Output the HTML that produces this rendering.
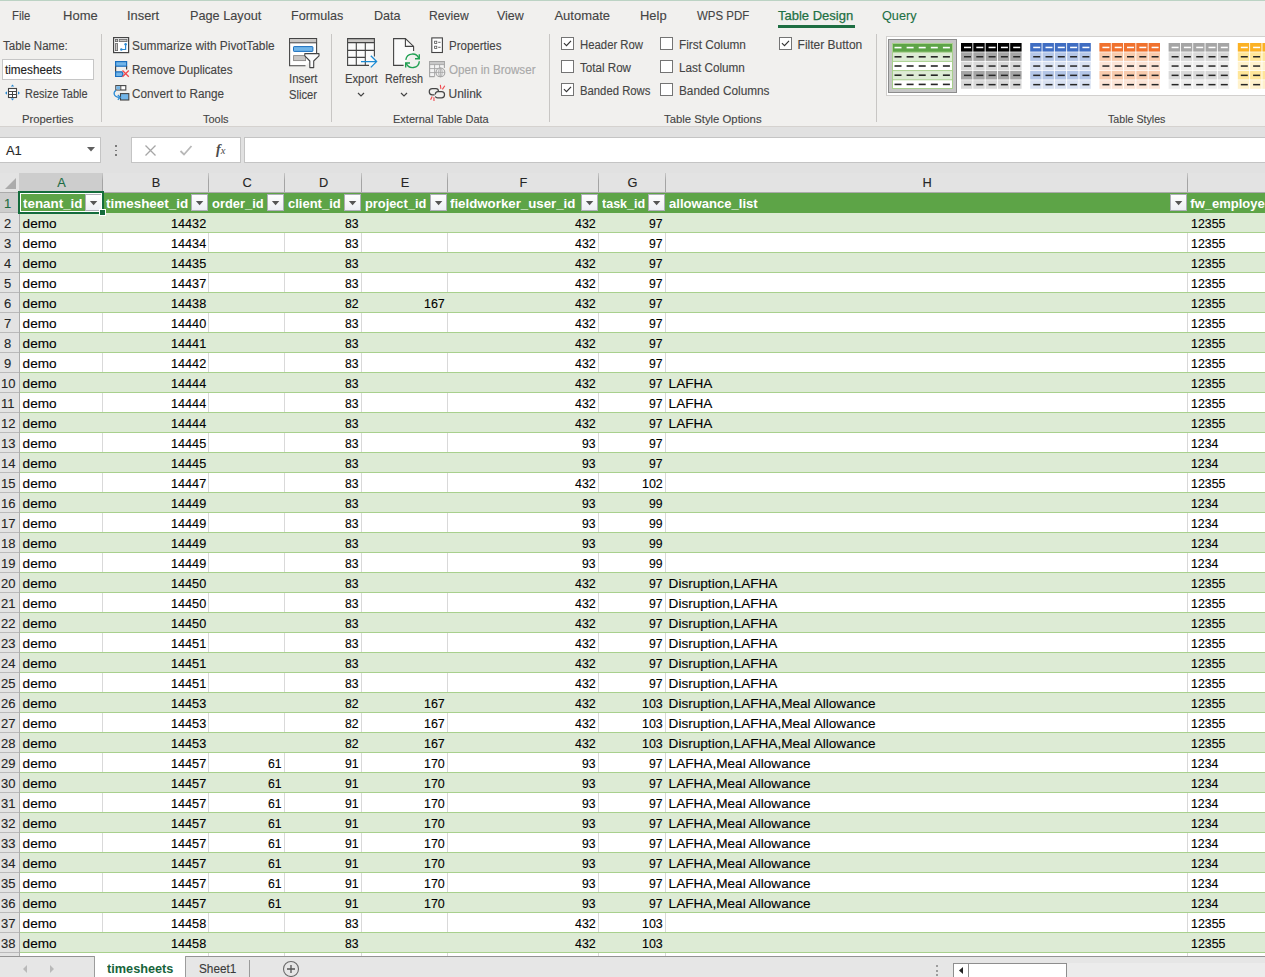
<!DOCTYPE html><html><head><meta charset="utf-8"><style>
html,body{margin:0;padding:0;}
body{width:1265px;height:977px;overflow:hidden;position:relative;font-family:"Liberation Sans",sans-serif;background:#e1e1e1;}
.t{position:absolute;white-space:pre;transform-origin:0 0;-webkit-text-stroke:0.12px currentColor;}
.r{position:absolute;}
</style></head><body>
<div class="r" style="left:0px;top:0px;width:1265px;height:126px;background:#f1f0ee"></div>
<div class="r" style="left:0px;top:0px;width:1265px;height:1px;background:#bcd3c4"></div>
<div class="r" style="left:0px;top:126px;width:1265px;height:1px;background:#d5d2cf"></div>
<div class="r" style="left:0px;top:127px;width:1265px;height:850px;background:#e1e1e1"></div>
<div class="t" style="left:11.60px;top:9.20px;font-size:13px;line-height:13px;color:#444;transform:scaleX(0.8738);">File</div>
<div class="t" style="left:63.10px;top:9.20px;font-size:13px;line-height:13px;color:#444;">Home</div>
<div class="t" style="left:127.20px;top:9.20px;font-size:13px;line-height:13px;color:#444;transform:scaleX(0.9904);">Insert</div>
<div class="t" style="left:189.90px;top:9.20px;font-size:13px;line-height:13px;color:#444;transform:scaleX(0.9780);">Page Layout</div>
<div class="t" style="left:291.20px;top:9.20px;font-size:13px;line-height:13px;color:#444;transform:scaleX(0.9671);">Formulas</div>
<div class="t" style="left:373.50px;top:9.20px;font-size:13px;line-height:13px;color:#444;transform:scaleX(0.9647);">Data</div>
<div class="t" style="left:429.20px;top:9.20px;font-size:13px;line-height:13px;color:#444;transform:scaleX(0.9328);">Review</div>
<div class="t" style="left:497.00px;top:9.20px;font-size:13px;line-height:13px;color:#444;transform:scaleX(0.9580);">View</div>
<div class="t" style="left:554.40px;top:9.20px;font-size:13px;line-height:13px;color:#444;">Automate</div>
<div class="t" style="left:640.00px;top:9.20px;font-size:13px;line-height:13px;color:#444;transform:scaleX(0.9947);">Help</div>
<div class="t" style="left:697.00px;top:9.20px;font-size:13px;line-height:13px;color:#444;transform:scaleX(0.8830);">WPS PDF</div>
<div class="t" style="left:778.00px;top:9.20px;font-size:13px;line-height:13px;color:#1e7145;-webkit-text-stroke:0.25px #1e7145;">Table Design</div>
<div class="t" style="left:882.00px;top:9.20px;font-size:13px;line-height:13px;color:#1e7145;transform:scaleX(0.9746);">Query</div>
<div class="r" style="left:778px;top:25px;width:77px;height:3px;background:#1e6e42"></div>
<div class="t" style="left:21.50px;top:112.58px;font-size:11.6px;line-height:11.6px;color:#444;transform:scaleX(0.9740);">Properties</div>
<div class="t" style="left:203.40px;top:112.58px;font-size:11.6px;line-height:11.6px;color:#444;transform:scaleX(0.9455);">Tools</div>
<div class="t" style="left:392.70px;top:112.58px;font-size:11.6px;line-height:11.6px;color:#444;transform:scaleX(0.9482);">External Table Data</div>
<div class="t" style="left:664.00px;top:112.58px;font-size:11.6px;line-height:11.6px;color:#444;transform:scaleX(0.9765);">Table Style Options</div>
<div class="t" style="left:1108.00px;top:112.58px;font-size:11.6px;line-height:11.6px;color:#444;transform:scaleX(0.9177);">Table Styles</div>
<div class="r" style="left:101px;top:34px;width:1px;height:88px;background:#c8c6c4"></div>
<div class="r" style="left:331px;top:34px;width:1px;height:88px;background:#c8c6c4"></div>
<div class="r" style="left:549px;top:34px;width:1px;height:88px;background:#c8c6c4"></div>
<div class="r" style="left:876px;top:34px;width:1px;height:88px;background:#c8c6c4"></div>
<div class="t" style="left:2.60px;top:40.04px;font-size:12px;line-height:12px;color:#444;transform:scaleX(0.9619);">Table Name:</div>
<div class="r" style="left:2px;top:59px;width:92px;height:21px;background:#fff;box-sizing:border-box;border:1px solid #c6c6c6"></div>
<div class="t" style="left:5.40px;top:63.84px;font-size:12px;line-height:12px;color:#222;transform:scaleX(0.9755);">timesheets</div>
<div class="t" style="left:24.80px;top:87.64px;font-size:12px;line-height:12px;color:#444;transform:scaleX(0.9126);">Resize Table</div>
<div class="t" style="left:132.30px;top:39.84px;font-size:12px;line-height:12px;color:#444;transform:scaleX(0.9906);">Summarize with PivotTable</div>
<div class="t" style="left:132.30px;top:63.84px;font-size:12px;line-height:12px;color:#444;transform:scaleX(0.9660);">Remove Duplicates</div>
<div class="t" style="left:132.30px;top:87.84px;font-size:12px;line-height:12px;color:#444;transform:scaleX(0.9781);">Convert to Range</div>
<div class="t" style="left:288.50px;top:72.84px;font-size:12px;line-height:12px;color:#444;transform:scaleX(0.9496);">Insert</div>
<div class="t" style="left:289.00px;top:88.54px;font-size:12px;line-height:12px;color:#444;transform:scaleX(0.9330);">Slicer</div>
<div class="t" style="left:344.50px;top:72.54px;font-size:12px;line-height:12px;color:#444;transform:scaleX(0.9371);">Export</div>
<div class="t" style="left:384.50px;top:72.54px;font-size:12px;line-height:12px;color:#444;transform:scaleX(0.9021);">Refresh</div>
<div class="t" style="left:448.50px;top:40.44px;font-size:12px;line-height:12px;color:#444;transform:scaleX(0.9599);">Properties</div>
<div class="t" style="left:448.50px;top:63.84px;font-size:12px;line-height:12px;color:#a8a8a8;transform:scaleX(0.9678);">Open in Browser</div>
<div class="t" style="left:448.50px;top:87.84px;font-size:12px;line-height:12px;color:#444;">Unlink</div>
<div class="r" style="left:561px;top:37px;width:13px;height:13px;box-sizing:border-box;border:1px solid #747474;background:#fff"></div>
<svg class="r" style="left:561px;top:37px" width="13" height="13"><path d="M2.9 6.2 L5.5 8.6 L10 3.8" fill="none" stroke="#333" stroke-width="1.15"/></svg>
<div class="t" style="left:579.60px;top:38.84px;font-size:12px;line-height:12px;color:#444;transform:scaleX(0.9456);">Header Row</div>
<div class="r" style="left:561px;top:60px;width:13px;height:13px;box-sizing:border-box;border:1px solid #747474;background:#fff"></div>
<div class="t" style="left:579.60px;top:61.84px;font-size:12px;line-height:12px;color:#444;transform:scaleX(0.9674);">Total Row</div>
<div class="r" style="left:561px;top:83px;width:13px;height:13px;box-sizing:border-box;border:1px solid #747474;background:#fff"></div>
<svg class="r" style="left:561px;top:83px" width="13" height="13"><path d="M2.9 6.2 L5.5 8.6 L10 3.8" fill="none" stroke="#333" stroke-width="1.15"/></svg>
<div class="t" style="left:579.60px;top:84.84px;font-size:12px;line-height:12px;color:#444;transform:scaleX(0.9423);">Banded Rows</div>
<div class="r" style="left:660px;top:37px;width:13px;height:13px;box-sizing:border-box;border:1px solid #747474;background:#fff"></div>
<div class="t" style="left:678.60px;top:38.84px;font-size:12px;line-height:12px;color:#444;transform:scaleX(0.9836);">First Column</div>
<div class="r" style="left:660px;top:60px;width:13px;height:13px;box-sizing:border-box;border:1px solid #747474;background:#fff"></div>
<div class="t" style="left:678.60px;top:61.84px;font-size:12px;line-height:12px;color:#444;transform:scaleX(0.9782);">Last Column</div>
<div class="r" style="left:660px;top:83px;width:13px;height:13px;box-sizing:border-box;border:1px solid #747474;background:#fff"></div>
<div class="t" style="left:678.60px;top:84.84px;font-size:12px;line-height:12px;color:#444;transform:scaleX(0.9831);">Banded Columns</div>
<div class="r" style="left:779px;top:37px;width:13px;height:13px;box-sizing:border-box;border:1px solid #747474;background:#fff"></div>
<svg class="r" style="left:779px;top:37px" width="13" height="13"><path d="M2.9 6.2 L5.5 8.6 L10 3.8" fill="none" stroke="#333" stroke-width="1.15"/></svg>
<div class="t" style="left:797.60px;top:38.84px;font-size:12px;line-height:12px;color:#444;">Filter Button</div>
<div class="r" style="left:0px;top:173px;width:1265px;height:19px;background:#e3e3e3"></div>
<div class="r" style="left:0px;top:192px;width:1265px;height:1px;background:#ababab"></div>
<div class="r" style="left:19px;top:173px;width:84px;height:19px;background:#cdcdcd"></div>
<svg class="r" style="left:4px;top:177px" width="13" height="13"><path d="M1 12 L12 12 L12 1 Z" fill="#ababab"/></svg>
<div class="r" style="left:102px;top:173px;width:1px;height:19px;background:linear-gradient(#c8c8c8,#a4a4a4 40%,#a4a4a4)"></div>
<div class="t" style="left:57.23px;top:177.16px;font-size:12.8px;line-height:12.8px;color:#1d6b44;">A</div>
<div class="r" style="left:208px;top:173px;width:1px;height:19px;background:linear-gradient(#c8c8c8,#a4a4a4 40%,#a4a4a4)"></div>
<div class="t" style="left:151.73px;top:177.16px;font-size:12.8px;line-height:12.8px;color:#262626;">B</div>
<div class="r" style="left:284px;top:173px;width:1px;height:19px;background:linear-gradient(#c8c8c8,#a4a4a4 40%,#a4a4a4)"></div>
<div class="t" style="left:242.38px;top:177.16px;font-size:12.8px;line-height:12.8px;color:#262626;">C</div>
<div class="r" style="left:361px;top:173px;width:1px;height:19px;background:linear-gradient(#c8c8c8,#a4a4a4 40%,#a4a4a4)"></div>
<div class="t" style="left:318.88px;top:177.16px;font-size:12.8px;line-height:12.8px;color:#262626;">D</div>
<div class="r" style="left:447px;top:173px;width:1px;height:19px;background:linear-gradient(#c8c8c8,#a4a4a4 40%,#a4a4a4)"></div>
<div class="t" style="left:400.73px;top:177.16px;font-size:12.8px;line-height:12.8px;color:#262626;">E</div>
<div class="r" style="left:598px;top:173px;width:1px;height:19px;background:linear-gradient(#c8c8c8,#a4a4a4 40%,#a4a4a4)"></div>
<div class="t" style="left:519.59px;top:177.16px;font-size:12.8px;line-height:12.8px;color:#262626;">F</div>
<div class="r" style="left:665px;top:173px;width:1px;height:19px;background:linear-gradient(#c8c8c8,#a4a4a4 40%,#a4a4a4)"></div>
<div class="t" style="left:627.52px;top:177.16px;font-size:12.8px;line-height:12.8px;color:#262626;">G</div>
<div class="r" style="left:1187px;top:173px;width:1px;height:19px;background:linear-gradient(#c8c8c8,#a4a4a4 40%,#a4a4a4)"></div>
<div class="t" style="left:922.38px;top:177.16px;font-size:12.8px;line-height:12.8px;color:#262626;">H</div>
<div class="r" style="left:1400px;top:173px;width:1px;height:19px;background:linear-gradient(#c8c8c8,#a4a4a4 40%,#a4a4a4)"></div>
<div class="r" style="left:0px;top:193px;width:19px;height:765px;background:#e3e3e3"></div>
<div class="r" style="left:19px;top:193px;width:1px;height:765px;background:#adadad"></div>
<div class="r" style="left:0px;top:193px;width:19px;height:19px;background:#cdcdcd"></div>
<div class="r" style="left:0px;top:212px;width:19px;height:1px;background:#bababa"></div>
<div class="r" style="left:20px;top:193px;width:1245px;height:20px;background:#5da447"></div>
<div class="t" style="left:4.00px;top:197.00px;font-size:13px;line-height:13px;color:#1d6b44;">1</div>
<div class="r" style="left:0px;top:232px;width:19px;height:1px;background:#bababa"></div>
<div class="r" style="left:20px;top:213px;width:1245px;height:19px;background:#ddebd5"></div>
<div class="t" style="left:4.00px;top:217.00px;font-size:13px;line-height:13px;color:#262626;">2</div>
<div class="r" style="left:0px;top:252px;width:19px;height:1px;background:#bababa"></div>
<div class="r" style="left:20px;top:233px;width:1245px;height:19px;background:#fff"></div>
<div class="r" style="left:102px;top:233px;width:1px;height:19px;background:#d9d9d9"></div>
<div class="r" style="left:208px;top:233px;width:1px;height:19px;background:#d9d9d9"></div>
<div class="r" style="left:284px;top:233px;width:1px;height:19px;background:#d9d9d9"></div>
<div class="r" style="left:361px;top:233px;width:1px;height:19px;background:#d9d9d9"></div>
<div class="r" style="left:447px;top:233px;width:1px;height:19px;background:#d9d9d9"></div>
<div class="r" style="left:598px;top:233px;width:1px;height:19px;background:#d9d9d9"></div>
<div class="r" style="left:665px;top:233px;width:1px;height:19px;background:#d9d9d9"></div>
<div class="r" style="left:1187px;top:233px;width:1px;height:19px;background:#d9d9d9"></div>
<div class="t" style="left:4.00px;top:237.00px;font-size:13px;line-height:13px;color:#262626;">3</div>
<div class="r" style="left:0px;top:272px;width:19px;height:1px;background:#bababa"></div>
<div class="r" style="left:20px;top:253px;width:1245px;height:19px;background:#ddebd5"></div>
<div class="t" style="left:4.00px;top:257.00px;font-size:13px;line-height:13px;color:#262626;">4</div>
<div class="r" style="left:0px;top:292px;width:19px;height:1px;background:#bababa"></div>
<div class="r" style="left:20px;top:273px;width:1245px;height:19px;background:#fff"></div>
<div class="r" style="left:102px;top:273px;width:1px;height:19px;background:#d9d9d9"></div>
<div class="r" style="left:208px;top:273px;width:1px;height:19px;background:#d9d9d9"></div>
<div class="r" style="left:284px;top:273px;width:1px;height:19px;background:#d9d9d9"></div>
<div class="r" style="left:361px;top:273px;width:1px;height:19px;background:#d9d9d9"></div>
<div class="r" style="left:447px;top:273px;width:1px;height:19px;background:#d9d9d9"></div>
<div class="r" style="left:598px;top:273px;width:1px;height:19px;background:#d9d9d9"></div>
<div class="r" style="left:665px;top:273px;width:1px;height:19px;background:#d9d9d9"></div>
<div class="r" style="left:1187px;top:273px;width:1px;height:19px;background:#d9d9d9"></div>
<div class="t" style="left:4.00px;top:277.00px;font-size:13px;line-height:13px;color:#262626;">5</div>
<div class="r" style="left:0px;top:312px;width:19px;height:1px;background:#bababa"></div>
<div class="r" style="left:20px;top:293px;width:1245px;height:19px;background:#ddebd5"></div>
<div class="t" style="left:4.00px;top:297.00px;font-size:13px;line-height:13px;color:#262626;">6</div>
<div class="r" style="left:0px;top:332px;width:19px;height:1px;background:#bababa"></div>
<div class="r" style="left:20px;top:313px;width:1245px;height:19px;background:#fff"></div>
<div class="r" style="left:102px;top:313px;width:1px;height:19px;background:#d9d9d9"></div>
<div class="r" style="left:208px;top:313px;width:1px;height:19px;background:#d9d9d9"></div>
<div class="r" style="left:284px;top:313px;width:1px;height:19px;background:#d9d9d9"></div>
<div class="r" style="left:361px;top:313px;width:1px;height:19px;background:#d9d9d9"></div>
<div class="r" style="left:447px;top:313px;width:1px;height:19px;background:#d9d9d9"></div>
<div class="r" style="left:598px;top:313px;width:1px;height:19px;background:#d9d9d9"></div>
<div class="r" style="left:665px;top:313px;width:1px;height:19px;background:#d9d9d9"></div>
<div class="r" style="left:1187px;top:313px;width:1px;height:19px;background:#d9d9d9"></div>
<div class="t" style="left:4.00px;top:317.00px;font-size:13px;line-height:13px;color:#262626;">7</div>
<div class="r" style="left:0px;top:352px;width:19px;height:1px;background:#bababa"></div>
<div class="r" style="left:20px;top:333px;width:1245px;height:19px;background:#ddebd5"></div>
<div class="t" style="left:4.00px;top:337.00px;font-size:13px;line-height:13px;color:#262626;">8</div>
<div class="r" style="left:0px;top:372px;width:19px;height:1px;background:#bababa"></div>
<div class="r" style="left:20px;top:353px;width:1245px;height:19px;background:#fff"></div>
<div class="r" style="left:102px;top:353px;width:1px;height:19px;background:#d9d9d9"></div>
<div class="r" style="left:208px;top:353px;width:1px;height:19px;background:#d9d9d9"></div>
<div class="r" style="left:284px;top:353px;width:1px;height:19px;background:#d9d9d9"></div>
<div class="r" style="left:361px;top:353px;width:1px;height:19px;background:#d9d9d9"></div>
<div class="r" style="left:447px;top:353px;width:1px;height:19px;background:#d9d9d9"></div>
<div class="r" style="left:598px;top:353px;width:1px;height:19px;background:#d9d9d9"></div>
<div class="r" style="left:665px;top:353px;width:1px;height:19px;background:#d9d9d9"></div>
<div class="r" style="left:1187px;top:353px;width:1px;height:19px;background:#d9d9d9"></div>
<div class="t" style="left:4.00px;top:357.00px;font-size:13px;line-height:13px;color:#262626;">9</div>
<div class="r" style="left:0px;top:392px;width:19px;height:1px;background:#bababa"></div>
<div class="r" style="left:20px;top:373px;width:1245px;height:19px;background:#ddebd5"></div>
<div class="t" style="left:1.00px;top:377.00px;font-size:13px;line-height:13px;color:#262626;">10</div>
<div class="r" style="left:0px;top:412px;width:19px;height:1px;background:#bababa"></div>
<div class="r" style="left:20px;top:393px;width:1245px;height:19px;background:#fff"></div>
<div class="r" style="left:102px;top:393px;width:1px;height:19px;background:#d9d9d9"></div>
<div class="r" style="left:208px;top:393px;width:1px;height:19px;background:#d9d9d9"></div>
<div class="r" style="left:284px;top:393px;width:1px;height:19px;background:#d9d9d9"></div>
<div class="r" style="left:361px;top:393px;width:1px;height:19px;background:#d9d9d9"></div>
<div class="r" style="left:447px;top:393px;width:1px;height:19px;background:#d9d9d9"></div>
<div class="r" style="left:598px;top:393px;width:1px;height:19px;background:#d9d9d9"></div>
<div class="r" style="left:665px;top:393px;width:1px;height:19px;background:#d9d9d9"></div>
<div class="r" style="left:1187px;top:393px;width:1px;height:19px;background:#d9d9d9"></div>
<div class="t" style="left:1.00px;top:397.00px;font-size:13px;line-height:13px;color:#262626;">11</div>
<div class="r" style="left:0px;top:432px;width:19px;height:1px;background:#bababa"></div>
<div class="r" style="left:20px;top:413px;width:1245px;height:19px;background:#ddebd5"></div>
<div class="t" style="left:1.00px;top:417.00px;font-size:13px;line-height:13px;color:#262626;">12</div>
<div class="r" style="left:0px;top:452px;width:19px;height:1px;background:#bababa"></div>
<div class="r" style="left:20px;top:433px;width:1245px;height:19px;background:#fff"></div>
<div class="r" style="left:102px;top:433px;width:1px;height:19px;background:#d9d9d9"></div>
<div class="r" style="left:208px;top:433px;width:1px;height:19px;background:#d9d9d9"></div>
<div class="r" style="left:284px;top:433px;width:1px;height:19px;background:#d9d9d9"></div>
<div class="r" style="left:361px;top:433px;width:1px;height:19px;background:#d9d9d9"></div>
<div class="r" style="left:447px;top:433px;width:1px;height:19px;background:#d9d9d9"></div>
<div class="r" style="left:598px;top:433px;width:1px;height:19px;background:#d9d9d9"></div>
<div class="r" style="left:665px;top:433px;width:1px;height:19px;background:#d9d9d9"></div>
<div class="r" style="left:1187px;top:433px;width:1px;height:19px;background:#d9d9d9"></div>
<div class="t" style="left:1.00px;top:437.00px;font-size:13px;line-height:13px;color:#262626;">13</div>
<div class="r" style="left:0px;top:472px;width:19px;height:1px;background:#bababa"></div>
<div class="r" style="left:20px;top:453px;width:1245px;height:19px;background:#ddebd5"></div>
<div class="t" style="left:1.00px;top:457.00px;font-size:13px;line-height:13px;color:#262626;">14</div>
<div class="r" style="left:0px;top:492px;width:19px;height:1px;background:#bababa"></div>
<div class="r" style="left:20px;top:473px;width:1245px;height:19px;background:#fff"></div>
<div class="r" style="left:102px;top:473px;width:1px;height:19px;background:#d9d9d9"></div>
<div class="r" style="left:208px;top:473px;width:1px;height:19px;background:#d9d9d9"></div>
<div class="r" style="left:284px;top:473px;width:1px;height:19px;background:#d9d9d9"></div>
<div class="r" style="left:361px;top:473px;width:1px;height:19px;background:#d9d9d9"></div>
<div class="r" style="left:447px;top:473px;width:1px;height:19px;background:#d9d9d9"></div>
<div class="r" style="left:598px;top:473px;width:1px;height:19px;background:#d9d9d9"></div>
<div class="r" style="left:665px;top:473px;width:1px;height:19px;background:#d9d9d9"></div>
<div class="r" style="left:1187px;top:473px;width:1px;height:19px;background:#d9d9d9"></div>
<div class="t" style="left:1.00px;top:477.00px;font-size:13px;line-height:13px;color:#262626;">15</div>
<div class="r" style="left:0px;top:512px;width:19px;height:1px;background:#bababa"></div>
<div class="r" style="left:20px;top:493px;width:1245px;height:19px;background:#ddebd5"></div>
<div class="t" style="left:1.00px;top:497.00px;font-size:13px;line-height:13px;color:#262626;">16</div>
<div class="r" style="left:0px;top:532px;width:19px;height:1px;background:#bababa"></div>
<div class="r" style="left:20px;top:513px;width:1245px;height:19px;background:#fff"></div>
<div class="r" style="left:102px;top:513px;width:1px;height:19px;background:#d9d9d9"></div>
<div class="r" style="left:208px;top:513px;width:1px;height:19px;background:#d9d9d9"></div>
<div class="r" style="left:284px;top:513px;width:1px;height:19px;background:#d9d9d9"></div>
<div class="r" style="left:361px;top:513px;width:1px;height:19px;background:#d9d9d9"></div>
<div class="r" style="left:447px;top:513px;width:1px;height:19px;background:#d9d9d9"></div>
<div class="r" style="left:598px;top:513px;width:1px;height:19px;background:#d9d9d9"></div>
<div class="r" style="left:665px;top:513px;width:1px;height:19px;background:#d9d9d9"></div>
<div class="r" style="left:1187px;top:513px;width:1px;height:19px;background:#d9d9d9"></div>
<div class="t" style="left:1.00px;top:517.00px;font-size:13px;line-height:13px;color:#262626;">17</div>
<div class="r" style="left:0px;top:552px;width:19px;height:1px;background:#bababa"></div>
<div class="r" style="left:20px;top:533px;width:1245px;height:19px;background:#ddebd5"></div>
<div class="t" style="left:1.00px;top:537.00px;font-size:13px;line-height:13px;color:#262626;">18</div>
<div class="r" style="left:0px;top:572px;width:19px;height:1px;background:#bababa"></div>
<div class="r" style="left:20px;top:553px;width:1245px;height:19px;background:#fff"></div>
<div class="r" style="left:102px;top:553px;width:1px;height:19px;background:#d9d9d9"></div>
<div class="r" style="left:208px;top:553px;width:1px;height:19px;background:#d9d9d9"></div>
<div class="r" style="left:284px;top:553px;width:1px;height:19px;background:#d9d9d9"></div>
<div class="r" style="left:361px;top:553px;width:1px;height:19px;background:#d9d9d9"></div>
<div class="r" style="left:447px;top:553px;width:1px;height:19px;background:#d9d9d9"></div>
<div class="r" style="left:598px;top:553px;width:1px;height:19px;background:#d9d9d9"></div>
<div class="r" style="left:665px;top:553px;width:1px;height:19px;background:#d9d9d9"></div>
<div class="r" style="left:1187px;top:553px;width:1px;height:19px;background:#d9d9d9"></div>
<div class="t" style="left:1.00px;top:557.00px;font-size:13px;line-height:13px;color:#262626;">19</div>
<div class="r" style="left:0px;top:592px;width:19px;height:1px;background:#bababa"></div>
<div class="r" style="left:20px;top:573px;width:1245px;height:19px;background:#ddebd5"></div>
<div class="t" style="left:1.00px;top:577.00px;font-size:13px;line-height:13px;color:#262626;">20</div>
<div class="r" style="left:0px;top:612px;width:19px;height:1px;background:#bababa"></div>
<div class="r" style="left:20px;top:593px;width:1245px;height:19px;background:#fff"></div>
<div class="r" style="left:102px;top:593px;width:1px;height:19px;background:#d9d9d9"></div>
<div class="r" style="left:208px;top:593px;width:1px;height:19px;background:#d9d9d9"></div>
<div class="r" style="left:284px;top:593px;width:1px;height:19px;background:#d9d9d9"></div>
<div class="r" style="left:361px;top:593px;width:1px;height:19px;background:#d9d9d9"></div>
<div class="r" style="left:447px;top:593px;width:1px;height:19px;background:#d9d9d9"></div>
<div class="r" style="left:598px;top:593px;width:1px;height:19px;background:#d9d9d9"></div>
<div class="r" style="left:665px;top:593px;width:1px;height:19px;background:#d9d9d9"></div>
<div class="r" style="left:1187px;top:593px;width:1px;height:19px;background:#d9d9d9"></div>
<div class="t" style="left:1.00px;top:597.00px;font-size:13px;line-height:13px;color:#262626;">21</div>
<div class="r" style="left:0px;top:632px;width:19px;height:1px;background:#bababa"></div>
<div class="r" style="left:20px;top:613px;width:1245px;height:19px;background:#ddebd5"></div>
<div class="t" style="left:1.00px;top:617.00px;font-size:13px;line-height:13px;color:#262626;">22</div>
<div class="r" style="left:0px;top:652px;width:19px;height:1px;background:#bababa"></div>
<div class="r" style="left:20px;top:633px;width:1245px;height:19px;background:#fff"></div>
<div class="r" style="left:102px;top:633px;width:1px;height:19px;background:#d9d9d9"></div>
<div class="r" style="left:208px;top:633px;width:1px;height:19px;background:#d9d9d9"></div>
<div class="r" style="left:284px;top:633px;width:1px;height:19px;background:#d9d9d9"></div>
<div class="r" style="left:361px;top:633px;width:1px;height:19px;background:#d9d9d9"></div>
<div class="r" style="left:447px;top:633px;width:1px;height:19px;background:#d9d9d9"></div>
<div class="r" style="left:598px;top:633px;width:1px;height:19px;background:#d9d9d9"></div>
<div class="r" style="left:665px;top:633px;width:1px;height:19px;background:#d9d9d9"></div>
<div class="r" style="left:1187px;top:633px;width:1px;height:19px;background:#d9d9d9"></div>
<div class="t" style="left:1.00px;top:637.00px;font-size:13px;line-height:13px;color:#262626;">23</div>
<div class="r" style="left:0px;top:672px;width:19px;height:1px;background:#bababa"></div>
<div class="r" style="left:20px;top:653px;width:1245px;height:19px;background:#ddebd5"></div>
<div class="t" style="left:1.00px;top:657.00px;font-size:13px;line-height:13px;color:#262626;">24</div>
<div class="r" style="left:0px;top:692px;width:19px;height:1px;background:#bababa"></div>
<div class="r" style="left:20px;top:673px;width:1245px;height:19px;background:#fff"></div>
<div class="r" style="left:102px;top:673px;width:1px;height:19px;background:#d9d9d9"></div>
<div class="r" style="left:208px;top:673px;width:1px;height:19px;background:#d9d9d9"></div>
<div class="r" style="left:284px;top:673px;width:1px;height:19px;background:#d9d9d9"></div>
<div class="r" style="left:361px;top:673px;width:1px;height:19px;background:#d9d9d9"></div>
<div class="r" style="left:447px;top:673px;width:1px;height:19px;background:#d9d9d9"></div>
<div class="r" style="left:598px;top:673px;width:1px;height:19px;background:#d9d9d9"></div>
<div class="r" style="left:665px;top:673px;width:1px;height:19px;background:#d9d9d9"></div>
<div class="r" style="left:1187px;top:673px;width:1px;height:19px;background:#d9d9d9"></div>
<div class="t" style="left:1.00px;top:677.00px;font-size:13px;line-height:13px;color:#262626;">25</div>
<div class="r" style="left:0px;top:712px;width:19px;height:1px;background:#bababa"></div>
<div class="r" style="left:20px;top:693px;width:1245px;height:19px;background:#ddebd5"></div>
<div class="t" style="left:1.00px;top:697.00px;font-size:13px;line-height:13px;color:#262626;">26</div>
<div class="r" style="left:0px;top:732px;width:19px;height:1px;background:#bababa"></div>
<div class="r" style="left:20px;top:713px;width:1245px;height:19px;background:#fff"></div>
<div class="r" style="left:102px;top:713px;width:1px;height:19px;background:#d9d9d9"></div>
<div class="r" style="left:208px;top:713px;width:1px;height:19px;background:#d9d9d9"></div>
<div class="r" style="left:284px;top:713px;width:1px;height:19px;background:#d9d9d9"></div>
<div class="r" style="left:361px;top:713px;width:1px;height:19px;background:#d9d9d9"></div>
<div class="r" style="left:447px;top:713px;width:1px;height:19px;background:#d9d9d9"></div>
<div class="r" style="left:598px;top:713px;width:1px;height:19px;background:#d9d9d9"></div>
<div class="r" style="left:665px;top:713px;width:1px;height:19px;background:#d9d9d9"></div>
<div class="r" style="left:1187px;top:713px;width:1px;height:19px;background:#d9d9d9"></div>
<div class="t" style="left:1.00px;top:717.00px;font-size:13px;line-height:13px;color:#262626;">27</div>
<div class="r" style="left:0px;top:752px;width:19px;height:1px;background:#bababa"></div>
<div class="r" style="left:20px;top:733px;width:1245px;height:19px;background:#ddebd5"></div>
<div class="t" style="left:1.00px;top:737.00px;font-size:13px;line-height:13px;color:#262626;">28</div>
<div class="r" style="left:0px;top:772px;width:19px;height:1px;background:#bababa"></div>
<div class="r" style="left:20px;top:753px;width:1245px;height:19px;background:#fff"></div>
<div class="r" style="left:102px;top:753px;width:1px;height:19px;background:#d9d9d9"></div>
<div class="r" style="left:208px;top:753px;width:1px;height:19px;background:#d9d9d9"></div>
<div class="r" style="left:284px;top:753px;width:1px;height:19px;background:#d9d9d9"></div>
<div class="r" style="left:361px;top:753px;width:1px;height:19px;background:#d9d9d9"></div>
<div class="r" style="left:447px;top:753px;width:1px;height:19px;background:#d9d9d9"></div>
<div class="r" style="left:598px;top:753px;width:1px;height:19px;background:#d9d9d9"></div>
<div class="r" style="left:665px;top:753px;width:1px;height:19px;background:#d9d9d9"></div>
<div class="r" style="left:1187px;top:753px;width:1px;height:19px;background:#d9d9d9"></div>
<div class="t" style="left:1.00px;top:757.00px;font-size:13px;line-height:13px;color:#262626;">29</div>
<div class="r" style="left:0px;top:792px;width:19px;height:1px;background:#bababa"></div>
<div class="r" style="left:20px;top:773px;width:1245px;height:19px;background:#ddebd5"></div>
<div class="t" style="left:1.00px;top:777.00px;font-size:13px;line-height:13px;color:#262626;">30</div>
<div class="r" style="left:0px;top:812px;width:19px;height:1px;background:#bababa"></div>
<div class="r" style="left:20px;top:793px;width:1245px;height:19px;background:#fff"></div>
<div class="r" style="left:102px;top:793px;width:1px;height:19px;background:#d9d9d9"></div>
<div class="r" style="left:208px;top:793px;width:1px;height:19px;background:#d9d9d9"></div>
<div class="r" style="left:284px;top:793px;width:1px;height:19px;background:#d9d9d9"></div>
<div class="r" style="left:361px;top:793px;width:1px;height:19px;background:#d9d9d9"></div>
<div class="r" style="left:447px;top:793px;width:1px;height:19px;background:#d9d9d9"></div>
<div class="r" style="left:598px;top:793px;width:1px;height:19px;background:#d9d9d9"></div>
<div class="r" style="left:665px;top:793px;width:1px;height:19px;background:#d9d9d9"></div>
<div class="r" style="left:1187px;top:793px;width:1px;height:19px;background:#d9d9d9"></div>
<div class="t" style="left:1.00px;top:797.00px;font-size:13px;line-height:13px;color:#262626;">31</div>
<div class="r" style="left:0px;top:832px;width:19px;height:1px;background:#bababa"></div>
<div class="r" style="left:20px;top:813px;width:1245px;height:19px;background:#ddebd5"></div>
<div class="t" style="left:1.00px;top:817.00px;font-size:13px;line-height:13px;color:#262626;">32</div>
<div class="r" style="left:0px;top:852px;width:19px;height:1px;background:#bababa"></div>
<div class="r" style="left:20px;top:833px;width:1245px;height:19px;background:#fff"></div>
<div class="r" style="left:102px;top:833px;width:1px;height:19px;background:#d9d9d9"></div>
<div class="r" style="left:208px;top:833px;width:1px;height:19px;background:#d9d9d9"></div>
<div class="r" style="left:284px;top:833px;width:1px;height:19px;background:#d9d9d9"></div>
<div class="r" style="left:361px;top:833px;width:1px;height:19px;background:#d9d9d9"></div>
<div class="r" style="left:447px;top:833px;width:1px;height:19px;background:#d9d9d9"></div>
<div class="r" style="left:598px;top:833px;width:1px;height:19px;background:#d9d9d9"></div>
<div class="r" style="left:665px;top:833px;width:1px;height:19px;background:#d9d9d9"></div>
<div class="r" style="left:1187px;top:833px;width:1px;height:19px;background:#d9d9d9"></div>
<div class="t" style="left:1.00px;top:837.00px;font-size:13px;line-height:13px;color:#262626;">33</div>
<div class="r" style="left:0px;top:872px;width:19px;height:1px;background:#bababa"></div>
<div class="r" style="left:20px;top:853px;width:1245px;height:19px;background:#ddebd5"></div>
<div class="t" style="left:1.00px;top:857.00px;font-size:13px;line-height:13px;color:#262626;">34</div>
<div class="r" style="left:0px;top:892px;width:19px;height:1px;background:#bababa"></div>
<div class="r" style="left:20px;top:873px;width:1245px;height:19px;background:#fff"></div>
<div class="r" style="left:102px;top:873px;width:1px;height:19px;background:#d9d9d9"></div>
<div class="r" style="left:208px;top:873px;width:1px;height:19px;background:#d9d9d9"></div>
<div class="r" style="left:284px;top:873px;width:1px;height:19px;background:#d9d9d9"></div>
<div class="r" style="left:361px;top:873px;width:1px;height:19px;background:#d9d9d9"></div>
<div class="r" style="left:447px;top:873px;width:1px;height:19px;background:#d9d9d9"></div>
<div class="r" style="left:598px;top:873px;width:1px;height:19px;background:#d9d9d9"></div>
<div class="r" style="left:665px;top:873px;width:1px;height:19px;background:#d9d9d9"></div>
<div class="r" style="left:1187px;top:873px;width:1px;height:19px;background:#d9d9d9"></div>
<div class="t" style="left:1.00px;top:877.00px;font-size:13px;line-height:13px;color:#262626;">35</div>
<div class="r" style="left:0px;top:912px;width:19px;height:1px;background:#bababa"></div>
<div class="r" style="left:20px;top:893px;width:1245px;height:19px;background:#ddebd5"></div>
<div class="t" style="left:1.00px;top:897.00px;font-size:13px;line-height:13px;color:#262626;">36</div>
<div class="r" style="left:0px;top:932px;width:19px;height:1px;background:#bababa"></div>
<div class="r" style="left:20px;top:913px;width:1245px;height:19px;background:#fff"></div>
<div class="r" style="left:102px;top:913px;width:1px;height:19px;background:#d9d9d9"></div>
<div class="r" style="left:208px;top:913px;width:1px;height:19px;background:#d9d9d9"></div>
<div class="r" style="left:284px;top:913px;width:1px;height:19px;background:#d9d9d9"></div>
<div class="r" style="left:361px;top:913px;width:1px;height:19px;background:#d9d9d9"></div>
<div class="r" style="left:447px;top:913px;width:1px;height:19px;background:#d9d9d9"></div>
<div class="r" style="left:598px;top:913px;width:1px;height:19px;background:#d9d9d9"></div>
<div class="r" style="left:665px;top:913px;width:1px;height:19px;background:#d9d9d9"></div>
<div class="r" style="left:1187px;top:913px;width:1px;height:19px;background:#d9d9d9"></div>
<div class="t" style="left:1.00px;top:917.00px;font-size:13px;line-height:13px;color:#262626;">37</div>
<div class="r" style="left:0px;top:952px;width:19px;height:1px;background:#bababa"></div>
<div class="r" style="left:20px;top:933px;width:1245px;height:19px;background:#ddebd5"></div>
<div class="t" style="left:1.00px;top:937.00px;font-size:13px;line-height:13px;color:#262626;">38</div>
<div class="r" style="left:0px;top:972px;width:19px;height:1px;background:#bababa"></div>
<div class="r" style="left:20px;top:953px;width:1245px;height:19px;background:#fff"></div>
<div class="r" style="left:102px;top:953px;width:1px;height:19px;background:#d9d9d9"></div>
<div class="r" style="left:208px;top:953px;width:1px;height:19px;background:#d9d9d9"></div>
<div class="r" style="left:284px;top:953px;width:1px;height:19px;background:#d9d9d9"></div>
<div class="r" style="left:361px;top:953px;width:1px;height:19px;background:#d9d9d9"></div>
<div class="r" style="left:447px;top:953px;width:1px;height:19px;background:#d9d9d9"></div>
<div class="r" style="left:598px;top:953px;width:1px;height:19px;background:#d9d9d9"></div>
<div class="r" style="left:665px;top:953px;width:1px;height:19px;background:#d9d9d9"></div>
<div class="r" style="left:1187px;top:953px;width:1px;height:19px;background:#d9d9d9"></div>
<div class="t" style="left:1.00px;top:957.00px;font-size:13px;line-height:13px;color:#262626;">39</div>
<div class="r" style="left:20px;top:232px;width:1245px;height:1px;background:#a8d08d"></div>
<div class="r" style="left:20px;top:252px;width:1245px;height:1px;background:#a8d08d"></div>
<div class="r" style="left:20px;top:272px;width:1245px;height:1px;background:#a8d08d"></div>
<div class="r" style="left:20px;top:292px;width:1245px;height:1px;background:#a8d08d"></div>
<div class="r" style="left:20px;top:312px;width:1245px;height:1px;background:#a8d08d"></div>
<div class="r" style="left:20px;top:332px;width:1245px;height:1px;background:#a8d08d"></div>
<div class="r" style="left:20px;top:352px;width:1245px;height:1px;background:#a8d08d"></div>
<div class="r" style="left:20px;top:372px;width:1245px;height:1px;background:#a8d08d"></div>
<div class="r" style="left:20px;top:392px;width:1245px;height:1px;background:#a8d08d"></div>
<div class="r" style="left:20px;top:412px;width:1245px;height:1px;background:#a8d08d"></div>
<div class="r" style="left:20px;top:432px;width:1245px;height:1px;background:#a8d08d"></div>
<div class="r" style="left:20px;top:452px;width:1245px;height:1px;background:#a8d08d"></div>
<div class="r" style="left:20px;top:472px;width:1245px;height:1px;background:#a8d08d"></div>
<div class="r" style="left:20px;top:492px;width:1245px;height:1px;background:#a8d08d"></div>
<div class="r" style="left:20px;top:512px;width:1245px;height:1px;background:#a8d08d"></div>
<div class="r" style="left:20px;top:532px;width:1245px;height:1px;background:#a8d08d"></div>
<div class="r" style="left:20px;top:552px;width:1245px;height:1px;background:#a8d08d"></div>
<div class="r" style="left:20px;top:572px;width:1245px;height:1px;background:#a8d08d"></div>
<div class="r" style="left:20px;top:592px;width:1245px;height:1px;background:#a8d08d"></div>
<div class="r" style="left:20px;top:612px;width:1245px;height:1px;background:#a8d08d"></div>
<div class="r" style="left:20px;top:632px;width:1245px;height:1px;background:#a8d08d"></div>
<div class="r" style="left:20px;top:652px;width:1245px;height:1px;background:#a8d08d"></div>
<div class="r" style="left:20px;top:672px;width:1245px;height:1px;background:#a8d08d"></div>
<div class="r" style="left:20px;top:692px;width:1245px;height:1px;background:#a8d08d"></div>
<div class="r" style="left:20px;top:712px;width:1245px;height:1px;background:#a8d08d"></div>
<div class="r" style="left:20px;top:732px;width:1245px;height:1px;background:#a8d08d"></div>
<div class="r" style="left:20px;top:752px;width:1245px;height:1px;background:#a8d08d"></div>
<div class="r" style="left:20px;top:772px;width:1245px;height:1px;background:#a8d08d"></div>
<div class="r" style="left:20px;top:792px;width:1245px;height:1px;background:#a8d08d"></div>
<div class="r" style="left:20px;top:812px;width:1245px;height:1px;background:#a8d08d"></div>
<div class="r" style="left:20px;top:832px;width:1245px;height:1px;background:#a8d08d"></div>
<div class="r" style="left:20px;top:852px;width:1245px;height:1px;background:#a8d08d"></div>
<div class="r" style="left:20px;top:872px;width:1245px;height:1px;background:#a8d08d"></div>
<div class="r" style="left:20px;top:892px;width:1245px;height:1px;background:#a8d08d"></div>
<div class="r" style="left:20px;top:912px;width:1245px;height:1px;background:#a8d08d"></div>
<div class="r" style="left:20px;top:932px;width:1245px;height:1px;background:#a8d08d"></div>
<div class="r" style="left:20px;top:952px;width:1245px;height:1px;background:#a8d08d"></div>
<div class="r" style="left:20px;top:972px;width:1245px;height:1px;background:#a8d08d"></div>
<div class="t" style="left:22.70px;top:197.00px;font-size:13px;line-height:13px;color:#fff;font-weight:bold;-webkit-text-stroke:0;transform:scaleX(1.0297);">tenant_id</div>
<div class="r" style="left:85px;top:194px;width:17px;height:17px;box-sizing:border-box;border:1px solid #aeaeb8;background:linear-gradient(#ffffff,#eceef3)"></div>
<svg class="r" style="left:85px;top:194px" width="17" height="17"><path d="M4.9 6.9 L12.3 6.9 L8.6 11.3 Z" fill="#555"/></svg>
<div class="t" style="left:105.80px;top:197.00px;font-size:13px;line-height:13px;color:#fff;font-weight:bold;-webkit-text-stroke:0;transform:scaleX(1.0344);">timesheet_id</div>
<div class="r" style="left:191px;top:194px;width:17px;height:17px;box-sizing:border-box;border:1px solid #aeaeb8;background:linear-gradient(#ffffff,#eceef3)"></div>
<svg class="r" style="left:191px;top:194px" width="17" height="17"><path d="M4.9 6.9 L12.3 6.9 L8.6 11.3 Z" fill="#555"/></svg>
<div class="t" style="left:211.80px;top:197.00px;font-size:13px;line-height:13px;color:#fff;font-weight:bold;-webkit-text-stroke:0;transform:scaleX(0.9921);">order_id</div>
<div class="r" style="left:267px;top:194px;width:17px;height:17px;box-sizing:border-box;border:1px solid #aeaeb8;background:linear-gradient(#ffffff,#eceef3)"></div>
<svg class="r" style="left:267px;top:194px" width="17" height="17"><path d="M4.9 6.9 L12.3 6.9 L8.6 11.3 Z" fill="#555"/></svg>
<div class="t" style="left:288.00px;top:197.00px;font-size:13px;line-height:13px;color:#fff;font-weight:bold;-webkit-text-stroke:0;">client_id</div>
<div class="r" style="left:344px;top:194px;width:17px;height:17px;box-sizing:border-box;border:1px solid #aeaeb8;background:linear-gradient(#ffffff,#eceef3)"></div>
<svg class="r" style="left:344px;top:194px" width="17" height="17"><path d="M4.9 6.9 L12.3 6.9 L8.6 11.3 Z" fill="#555"/></svg>
<div class="t" style="left:365.10px;top:197.00px;font-size:13px;line-height:13px;color:#fff;font-weight:bold;-webkit-text-stroke:0;transform:scaleX(0.9867);">project_id</div>
<div class="r" style="left:430px;top:194px;width:17px;height:17px;box-sizing:border-box;border:1px solid #aeaeb8;background:linear-gradient(#ffffff,#eceef3)"></div>
<svg class="r" style="left:430px;top:194px" width="17" height="17"><path d="M4.9 6.9 L12.3 6.9 L8.6 11.3 Z" fill="#555"/></svg>
<div class="t" style="left:450.30px;top:197.00px;font-size:13px;line-height:13px;color:#fff;font-weight:bold;-webkit-text-stroke:0;transform:scaleX(1.0210);">fieldworker_user_id</div>
<div class="r" style="left:581px;top:194px;width:17px;height:17px;box-sizing:border-box;border:1px solid #aeaeb8;background:linear-gradient(#ffffff,#eceef3)"></div>
<svg class="r" style="left:581px;top:194px" width="17" height="17"><path d="M4.9 6.9 L12.3 6.9 L8.6 11.3 Z" fill="#555"/></svg>
<div class="t" style="left:601.50px;top:197.00px;font-size:13px;line-height:13px;color:#fff;font-weight:bold;-webkit-text-stroke:0;transform:scaleX(0.9643);">task_id</div>
<div class="r" style="left:648px;top:194px;width:17px;height:17px;box-sizing:border-box;border:1px solid #aeaeb8;background:linear-gradient(#ffffff,#eceef3)"></div>
<svg class="r" style="left:648px;top:194px" width="17" height="17"><path d="M4.9 6.9 L12.3 6.9 L8.6 11.3 Z" fill="#555"/></svg>
<div class="t" style="left:668.80px;top:197.00px;font-size:13px;line-height:13px;color:#fff;font-weight:bold;-webkit-text-stroke:0;transform:scaleX(1.0062);">allowance_list</div>
<div class="r" style="left:1170px;top:194px;width:17px;height:17px;box-sizing:border-box;border:1px solid #aeaeb8;background:linear-gradient(#ffffff,#eceef3)"></div>
<svg class="r" style="left:1170px;top:194px" width="17" height="17"><path d="M4.9 6.9 L12.3 6.9 L8.6 11.3 Z" fill="#555"/></svg>
<div class="t" style="left:1190.30px;top:197.00px;font-size:13px;line-height:13px;color:#fff;font-weight:bold;-webkit-text-stroke:0;">fw_employee_id</div>
<div class="t" style="left:22.60px;top:216.79px;font-size:13.6px;line-height:13.6px;color:#000;">demo</div>
<div class="t" style="left:170.50px;top:217.30px;font-size:13px;line-height:13px;color:#000;transform:scaleX(0.9736);">14432</div>
<div class="t" style="left:345.10px;top:217.30px;font-size:13px;line-height:13px;color:#000;transform:scaleX(0.9408);">83</div>
<div class="t" style="left:574.90px;top:217.30px;font-size:13px;line-height:13px;color:#000;transform:scaleX(0.9592);">432</div>
<div class="t" style="left:649.10px;top:217.30px;font-size:13px;line-height:13px;color:#000;transform:scaleX(0.9408);">97</div>
<div class="t" style="left:1190.50px;top:217.30px;font-size:13px;line-height:13px;color:#000;transform:scaleX(0.9515);">12355</div>
<div class="t" style="left:22.60px;top:236.79px;font-size:13.6px;line-height:13.6px;color:#000;">demo</div>
<div class="t" style="left:170.50px;top:237.30px;font-size:13px;line-height:13px;color:#000;transform:scaleX(0.9736);">14434</div>
<div class="t" style="left:345.10px;top:237.30px;font-size:13px;line-height:13px;color:#000;transform:scaleX(0.9408);">83</div>
<div class="t" style="left:574.90px;top:237.30px;font-size:13px;line-height:13px;color:#000;transform:scaleX(0.9592);">432</div>
<div class="t" style="left:649.10px;top:237.30px;font-size:13px;line-height:13px;color:#000;transform:scaleX(0.9408);">97</div>
<div class="t" style="left:1190.50px;top:237.30px;font-size:13px;line-height:13px;color:#000;transform:scaleX(0.9515);">12355</div>
<div class="t" style="left:22.60px;top:256.79px;font-size:13.6px;line-height:13.6px;color:#000;">demo</div>
<div class="t" style="left:170.50px;top:257.30px;font-size:13px;line-height:13px;color:#000;transform:scaleX(0.9736);">14435</div>
<div class="t" style="left:345.10px;top:257.30px;font-size:13px;line-height:13px;color:#000;transform:scaleX(0.9408);">83</div>
<div class="t" style="left:574.90px;top:257.30px;font-size:13px;line-height:13px;color:#000;transform:scaleX(0.9592);">432</div>
<div class="t" style="left:649.10px;top:257.30px;font-size:13px;line-height:13px;color:#000;transform:scaleX(0.9408);">97</div>
<div class="t" style="left:1190.50px;top:257.30px;font-size:13px;line-height:13px;color:#000;transform:scaleX(0.9515);">12355</div>
<div class="t" style="left:22.60px;top:276.79px;font-size:13.6px;line-height:13.6px;color:#000;">demo</div>
<div class="t" style="left:170.50px;top:277.30px;font-size:13px;line-height:13px;color:#000;transform:scaleX(0.9736);">14437</div>
<div class="t" style="left:345.10px;top:277.30px;font-size:13px;line-height:13px;color:#000;transform:scaleX(0.9408);">83</div>
<div class="t" style="left:574.90px;top:277.30px;font-size:13px;line-height:13px;color:#000;transform:scaleX(0.9592);">432</div>
<div class="t" style="left:649.10px;top:277.30px;font-size:13px;line-height:13px;color:#000;transform:scaleX(0.9408);">97</div>
<div class="t" style="left:1190.50px;top:277.30px;font-size:13px;line-height:13px;color:#000;transform:scaleX(0.9515);">12355</div>
<div class="t" style="left:22.60px;top:296.79px;font-size:13.6px;line-height:13.6px;color:#000;">demo</div>
<div class="t" style="left:170.50px;top:297.30px;font-size:13px;line-height:13px;color:#000;transform:scaleX(0.9736);">14438</div>
<div class="t" style="left:345.10px;top:297.30px;font-size:13px;line-height:13px;color:#000;transform:scaleX(0.9408);">82</div>
<div class="t" style="left:423.90px;top:297.30px;font-size:13px;line-height:13px;color:#000;transform:scaleX(0.9592);">167</div>
<div class="t" style="left:574.90px;top:297.30px;font-size:13px;line-height:13px;color:#000;transform:scaleX(0.9592);">432</div>
<div class="t" style="left:649.10px;top:297.30px;font-size:13px;line-height:13px;color:#000;transform:scaleX(0.9408);">97</div>
<div class="t" style="left:1190.50px;top:297.30px;font-size:13px;line-height:13px;color:#000;transform:scaleX(0.9515);">12355</div>
<div class="t" style="left:22.60px;top:316.79px;font-size:13.6px;line-height:13.6px;color:#000;">demo</div>
<div class="t" style="left:170.50px;top:317.30px;font-size:13px;line-height:13px;color:#000;transform:scaleX(0.9736);">14440</div>
<div class="t" style="left:345.10px;top:317.30px;font-size:13px;line-height:13px;color:#000;transform:scaleX(0.9408);">83</div>
<div class="t" style="left:574.90px;top:317.30px;font-size:13px;line-height:13px;color:#000;transform:scaleX(0.9592);">432</div>
<div class="t" style="left:649.10px;top:317.30px;font-size:13px;line-height:13px;color:#000;transform:scaleX(0.9408);">97</div>
<div class="t" style="left:1190.50px;top:317.30px;font-size:13px;line-height:13px;color:#000;transform:scaleX(0.9515);">12355</div>
<div class="t" style="left:22.60px;top:336.79px;font-size:13.6px;line-height:13.6px;color:#000;">demo</div>
<div class="t" style="left:170.50px;top:337.30px;font-size:13px;line-height:13px;color:#000;transform:scaleX(0.9736);">14441</div>
<div class="t" style="left:345.10px;top:337.30px;font-size:13px;line-height:13px;color:#000;transform:scaleX(0.9408);">83</div>
<div class="t" style="left:574.90px;top:337.30px;font-size:13px;line-height:13px;color:#000;transform:scaleX(0.9592);">432</div>
<div class="t" style="left:649.10px;top:337.30px;font-size:13px;line-height:13px;color:#000;transform:scaleX(0.9408);">97</div>
<div class="t" style="left:1190.50px;top:337.30px;font-size:13px;line-height:13px;color:#000;transform:scaleX(0.9515);">12355</div>
<div class="t" style="left:22.60px;top:356.79px;font-size:13.6px;line-height:13.6px;color:#000;">demo</div>
<div class="t" style="left:170.50px;top:357.30px;font-size:13px;line-height:13px;color:#000;transform:scaleX(0.9736);">14442</div>
<div class="t" style="left:345.10px;top:357.30px;font-size:13px;line-height:13px;color:#000;transform:scaleX(0.9408);">83</div>
<div class="t" style="left:574.90px;top:357.30px;font-size:13px;line-height:13px;color:#000;transform:scaleX(0.9592);">432</div>
<div class="t" style="left:649.10px;top:357.30px;font-size:13px;line-height:13px;color:#000;transform:scaleX(0.9408);">97</div>
<div class="t" style="left:1190.50px;top:357.30px;font-size:13px;line-height:13px;color:#000;transform:scaleX(0.9515);">12355</div>
<div class="t" style="left:22.60px;top:376.79px;font-size:13.6px;line-height:13.6px;color:#000;">demo</div>
<div class="t" style="left:170.50px;top:377.30px;font-size:13px;line-height:13px;color:#000;transform:scaleX(0.9736);">14444</div>
<div class="t" style="left:345.10px;top:377.30px;font-size:13px;line-height:13px;color:#000;transform:scaleX(0.9408);">83</div>
<div class="t" style="left:574.90px;top:377.30px;font-size:13px;line-height:13px;color:#000;transform:scaleX(0.9592);">432</div>
<div class="t" style="left:649.10px;top:377.30px;font-size:13px;line-height:13px;color:#000;transform:scaleX(0.9408);">97</div>
<div class="t" style="left:668.60px;top:376.79px;font-size:13.6px;line-height:13.6px;color:#000;">LAFHA</div>
<div class="t" style="left:1190.50px;top:377.30px;font-size:13px;line-height:13px;color:#000;transform:scaleX(0.9515);">12355</div>
<div class="t" style="left:22.60px;top:396.79px;font-size:13.6px;line-height:13.6px;color:#000;">demo</div>
<div class="t" style="left:170.50px;top:397.30px;font-size:13px;line-height:13px;color:#000;transform:scaleX(0.9736);">14444</div>
<div class="t" style="left:345.10px;top:397.30px;font-size:13px;line-height:13px;color:#000;transform:scaleX(0.9408);">83</div>
<div class="t" style="left:574.90px;top:397.30px;font-size:13px;line-height:13px;color:#000;transform:scaleX(0.9592);">432</div>
<div class="t" style="left:649.10px;top:397.30px;font-size:13px;line-height:13px;color:#000;transform:scaleX(0.9408);">97</div>
<div class="t" style="left:668.60px;top:396.79px;font-size:13.6px;line-height:13.6px;color:#000;">LAFHA</div>
<div class="t" style="left:1190.50px;top:397.30px;font-size:13px;line-height:13px;color:#000;transform:scaleX(0.9515);">12355</div>
<div class="t" style="left:22.60px;top:416.79px;font-size:13.6px;line-height:13.6px;color:#000;">demo</div>
<div class="t" style="left:170.50px;top:417.30px;font-size:13px;line-height:13px;color:#000;transform:scaleX(0.9736);">14444</div>
<div class="t" style="left:345.10px;top:417.30px;font-size:13px;line-height:13px;color:#000;transform:scaleX(0.9408);">83</div>
<div class="t" style="left:574.90px;top:417.30px;font-size:13px;line-height:13px;color:#000;transform:scaleX(0.9592);">432</div>
<div class="t" style="left:649.10px;top:417.30px;font-size:13px;line-height:13px;color:#000;transform:scaleX(0.9408);">97</div>
<div class="t" style="left:668.60px;top:416.79px;font-size:13.6px;line-height:13.6px;color:#000;">LAFHA</div>
<div class="t" style="left:1190.50px;top:417.30px;font-size:13px;line-height:13px;color:#000;transform:scaleX(0.9515);">12355</div>
<div class="t" style="left:22.60px;top:436.79px;font-size:13.6px;line-height:13.6px;color:#000;">demo</div>
<div class="t" style="left:170.50px;top:437.30px;font-size:13px;line-height:13px;color:#000;transform:scaleX(0.9736);">14445</div>
<div class="t" style="left:345.10px;top:437.30px;font-size:13px;line-height:13px;color:#000;transform:scaleX(0.9408);">83</div>
<div class="t" style="left:582.10px;top:437.30px;font-size:13px;line-height:13px;color:#000;transform:scaleX(0.9408);">93</div>
<div class="t" style="left:649.10px;top:437.30px;font-size:13px;line-height:13px;color:#000;transform:scaleX(0.9408);">97</div>
<div class="t" style="left:1190.50px;top:437.30px;font-size:13px;line-height:13px;color:#000;transform:scaleX(0.9473);">1234</div>
<div class="t" style="left:22.60px;top:456.79px;font-size:13.6px;line-height:13.6px;color:#000;">demo</div>
<div class="t" style="left:170.50px;top:457.30px;font-size:13px;line-height:13px;color:#000;transform:scaleX(0.9736);">14445</div>
<div class="t" style="left:345.10px;top:457.30px;font-size:13px;line-height:13px;color:#000;transform:scaleX(0.9408);">83</div>
<div class="t" style="left:582.10px;top:457.30px;font-size:13px;line-height:13px;color:#000;transform:scaleX(0.9408);">93</div>
<div class="t" style="left:649.10px;top:457.30px;font-size:13px;line-height:13px;color:#000;transform:scaleX(0.9408);">97</div>
<div class="t" style="left:1190.50px;top:457.30px;font-size:13px;line-height:13px;color:#000;transform:scaleX(0.9473);">1234</div>
<div class="t" style="left:22.60px;top:476.79px;font-size:13.6px;line-height:13.6px;color:#000;">demo</div>
<div class="t" style="left:170.50px;top:477.30px;font-size:13px;line-height:13px;color:#000;transform:scaleX(0.9736);">14447</div>
<div class="t" style="left:345.10px;top:477.30px;font-size:13px;line-height:13px;color:#000;transform:scaleX(0.9408);">83</div>
<div class="t" style="left:574.90px;top:477.30px;font-size:13px;line-height:13px;color:#000;transform:scaleX(0.9592);">432</div>
<div class="t" style="left:641.90px;top:477.30px;font-size:13px;line-height:13px;color:#000;transform:scaleX(0.9592);">102</div>
<div class="t" style="left:1190.50px;top:477.30px;font-size:13px;line-height:13px;color:#000;transform:scaleX(0.9515);">12355</div>
<div class="t" style="left:22.60px;top:496.79px;font-size:13.6px;line-height:13.6px;color:#000;">demo</div>
<div class="t" style="left:170.50px;top:497.30px;font-size:13px;line-height:13px;color:#000;transform:scaleX(0.9736);">14449</div>
<div class="t" style="left:345.10px;top:497.30px;font-size:13px;line-height:13px;color:#000;transform:scaleX(0.9408);">83</div>
<div class="t" style="left:582.10px;top:497.30px;font-size:13px;line-height:13px;color:#000;transform:scaleX(0.9408);">93</div>
<div class="t" style="left:649.10px;top:497.30px;font-size:13px;line-height:13px;color:#000;transform:scaleX(0.9408);">99</div>
<div class="t" style="left:1190.50px;top:497.30px;font-size:13px;line-height:13px;color:#000;transform:scaleX(0.9473);">1234</div>
<div class="t" style="left:22.60px;top:516.79px;font-size:13.6px;line-height:13.6px;color:#000;">demo</div>
<div class="t" style="left:170.50px;top:517.30px;font-size:13px;line-height:13px;color:#000;transform:scaleX(0.9736);">14449</div>
<div class="t" style="left:345.10px;top:517.30px;font-size:13px;line-height:13px;color:#000;transform:scaleX(0.9408);">83</div>
<div class="t" style="left:582.10px;top:517.30px;font-size:13px;line-height:13px;color:#000;transform:scaleX(0.9408);">93</div>
<div class="t" style="left:649.10px;top:517.30px;font-size:13px;line-height:13px;color:#000;transform:scaleX(0.9408);">99</div>
<div class="t" style="left:1190.50px;top:517.30px;font-size:13px;line-height:13px;color:#000;transform:scaleX(0.9473);">1234</div>
<div class="t" style="left:22.60px;top:536.79px;font-size:13.6px;line-height:13.6px;color:#000;">demo</div>
<div class="t" style="left:170.50px;top:537.30px;font-size:13px;line-height:13px;color:#000;transform:scaleX(0.9736);">14449</div>
<div class="t" style="left:345.10px;top:537.30px;font-size:13px;line-height:13px;color:#000;transform:scaleX(0.9408);">83</div>
<div class="t" style="left:582.10px;top:537.30px;font-size:13px;line-height:13px;color:#000;transform:scaleX(0.9408);">93</div>
<div class="t" style="left:649.10px;top:537.30px;font-size:13px;line-height:13px;color:#000;transform:scaleX(0.9408);">99</div>
<div class="t" style="left:1190.50px;top:537.30px;font-size:13px;line-height:13px;color:#000;transform:scaleX(0.9473);">1234</div>
<div class="t" style="left:22.60px;top:556.79px;font-size:13.6px;line-height:13.6px;color:#000;">demo</div>
<div class="t" style="left:170.50px;top:557.30px;font-size:13px;line-height:13px;color:#000;transform:scaleX(0.9736);">14449</div>
<div class="t" style="left:345.10px;top:557.30px;font-size:13px;line-height:13px;color:#000;transform:scaleX(0.9408);">83</div>
<div class="t" style="left:582.10px;top:557.30px;font-size:13px;line-height:13px;color:#000;transform:scaleX(0.9408);">93</div>
<div class="t" style="left:649.10px;top:557.30px;font-size:13px;line-height:13px;color:#000;transform:scaleX(0.9408);">99</div>
<div class="t" style="left:1190.50px;top:557.30px;font-size:13px;line-height:13px;color:#000;transform:scaleX(0.9473);">1234</div>
<div class="t" style="left:22.60px;top:576.79px;font-size:13.6px;line-height:13.6px;color:#000;">demo</div>
<div class="t" style="left:170.50px;top:577.30px;font-size:13px;line-height:13px;color:#000;transform:scaleX(0.9736);">14450</div>
<div class="t" style="left:345.10px;top:577.30px;font-size:13px;line-height:13px;color:#000;transform:scaleX(0.9408);">83</div>
<div class="t" style="left:574.90px;top:577.30px;font-size:13px;line-height:13px;color:#000;transform:scaleX(0.9592);">432</div>
<div class="t" style="left:649.10px;top:577.30px;font-size:13px;line-height:13px;color:#000;transform:scaleX(0.9408);">97</div>
<div class="t" style="left:668.60px;top:576.79px;font-size:13.6px;line-height:13.6px;color:#000;">Disruption,LAFHA</div>
<div class="t" style="left:1190.50px;top:577.30px;font-size:13px;line-height:13px;color:#000;transform:scaleX(0.9515);">12355</div>
<div class="t" style="left:22.60px;top:596.79px;font-size:13.6px;line-height:13.6px;color:#000;">demo</div>
<div class="t" style="left:170.50px;top:597.30px;font-size:13px;line-height:13px;color:#000;transform:scaleX(0.9736);">14450</div>
<div class="t" style="left:345.10px;top:597.30px;font-size:13px;line-height:13px;color:#000;transform:scaleX(0.9408);">83</div>
<div class="t" style="left:574.90px;top:597.30px;font-size:13px;line-height:13px;color:#000;transform:scaleX(0.9592);">432</div>
<div class="t" style="left:649.10px;top:597.30px;font-size:13px;line-height:13px;color:#000;transform:scaleX(0.9408);">97</div>
<div class="t" style="left:668.60px;top:596.79px;font-size:13.6px;line-height:13.6px;color:#000;">Disruption,LAFHA</div>
<div class="t" style="left:1190.50px;top:597.30px;font-size:13px;line-height:13px;color:#000;transform:scaleX(0.9515);">12355</div>
<div class="t" style="left:22.60px;top:616.79px;font-size:13.6px;line-height:13.6px;color:#000;">demo</div>
<div class="t" style="left:170.50px;top:617.30px;font-size:13px;line-height:13px;color:#000;transform:scaleX(0.9736);">14450</div>
<div class="t" style="left:345.10px;top:617.30px;font-size:13px;line-height:13px;color:#000;transform:scaleX(0.9408);">83</div>
<div class="t" style="left:574.90px;top:617.30px;font-size:13px;line-height:13px;color:#000;transform:scaleX(0.9592);">432</div>
<div class="t" style="left:649.10px;top:617.30px;font-size:13px;line-height:13px;color:#000;transform:scaleX(0.9408);">97</div>
<div class="t" style="left:668.60px;top:616.79px;font-size:13.6px;line-height:13.6px;color:#000;">Disruption,LAFHA</div>
<div class="t" style="left:1190.50px;top:617.30px;font-size:13px;line-height:13px;color:#000;transform:scaleX(0.9515);">12355</div>
<div class="t" style="left:22.60px;top:636.79px;font-size:13.6px;line-height:13.6px;color:#000;">demo</div>
<div class="t" style="left:170.50px;top:637.30px;font-size:13px;line-height:13px;color:#000;transform:scaleX(0.9736);">14451</div>
<div class="t" style="left:345.10px;top:637.30px;font-size:13px;line-height:13px;color:#000;transform:scaleX(0.9408);">83</div>
<div class="t" style="left:574.90px;top:637.30px;font-size:13px;line-height:13px;color:#000;transform:scaleX(0.9592);">432</div>
<div class="t" style="left:649.10px;top:637.30px;font-size:13px;line-height:13px;color:#000;transform:scaleX(0.9408);">97</div>
<div class="t" style="left:668.60px;top:636.79px;font-size:13.6px;line-height:13.6px;color:#000;">Disruption,LAFHA</div>
<div class="t" style="left:1190.50px;top:637.30px;font-size:13px;line-height:13px;color:#000;transform:scaleX(0.9515);">12355</div>
<div class="t" style="left:22.60px;top:656.79px;font-size:13.6px;line-height:13.6px;color:#000;">demo</div>
<div class="t" style="left:170.50px;top:657.30px;font-size:13px;line-height:13px;color:#000;transform:scaleX(0.9736);">14451</div>
<div class="t" style="left:345.10px;top:657.30px;font-size:13px;line-height:13px;color:#000;transform:scaleX(0.9408);">83</div>
<div class="t" style="left:574.90px;top:657.30px;font-size:13px;line-height:13px;color:#000;transform:scaleX(0.9592);">432</div>
<div class="t" style="left:649.10px;top:657.30px;font-size:13px;line-height:13px;color:#000;transform:scaleX(0.9408);">97</div>
<div class="t" style="left:668.60px;top:656.79px;font-size:13.6px;line-height:13.6px;color:#000;">Disruption,LAFHA</div>
<div class="t" style="left:1190.50px;top:657.30px;font-size:13px;line-height:13px;color:#000;transform:scaleX(0.9515);">12355</div>
<div class="t" style="left:22.60px;top:676.79px;font-size:13.6px;line-height:13.6px;color:#000;">demo</div>
<div class="t" style="left:170.50px;top:677.30px;font-size:13px;line-height:13px;color:#000;transform:scaleX(0.9736);">14451</div>
<div class="t" style="left:345.10px;top:677.30px;font-size:13px;line-height:13px;color:#000;transform:scaleX(0.9408);">83</div>
<div class="t" style="left:574.90px;top:677.30px;font-size:13px;line-height:13px;color:#000;transform:scaleX(0.9592);">432</div>
<div class="t" style="left:649.10px;top:677.30px;font-size:13px;line-height:13px;color:#000;transform:scaleX(0.9408);">97</div>
<div class="t" style="left:668.60px;top:676.79px;font-size:13.6px;line-height:13.6px;color:#000;">Disruption,LAFHA</div>
<div class="t" style="left:1190.50px;top:677.30px;font-size:13px;line-height:13px;color:#000;transform:scaleX(0.9515);">12355</div>
<div class="t" style="left:22.60px;top:696.79px;font-size:13.6px;line-height:13.6px;color:#000;">demo</div>
<div class="t" style="left:170.50px;top:697.30px;font-size:13px;line-height:13px;color:#000;transform:scaleX(0.9736);">14453</div>
<div class="t" style="left:345.10px;top:697.30px;font-size:13px;line-height:13px;color:#000;transform:scaleX(0.9408);">82</div>
<div class="t" style="left:423.90px;top:697.30px;font-size:13px;line-height:13px;color:#000;transform:scaleX(0.9592);">167</div>
<div class="t" style="left:574.90px;top:697.30px;font-size:13px;line-height:13px;color:#000;transform:scaleX(0.9592);">432</div>
<div class="t" style="left:641.90px;top:697.30px;font-size:13px;line-height:13px;color:#000;transform:scaleX(0.9592);">103</div>
<div class="t" style="left:668.60px;top:696.79px;font-size:13.6px;line-height:13.6px;color:#000;">Disruption,LAFHA,Meal Allowance</div>
<div class="t" style="left:1190.50px;top:697.30px;font-size:13px;line-height:13px;color:#000;transform:scaleX(0.9515);">12355</div>
<div class="t" style="left:22.60px;top:716.79px;font-size:13.6px;line-height:13.6px;color:#000;">demo</div>
<div class="t" style="left:170.50px;top:717.30px;font-size:13px;line-height:13px;color:#000;transform:scaleX(0.9736);">14453</div>
<div class="t" style="left:345.10px;top:717.30px;font-size:13px;line-height:13px;color:#000;transform:scaleX(0.9408);">82</div>
<div class="t" style="left:423.90px;top:717.30px;font-size:13px;line-height:13px;color:#000;transform:scaleX(0.9592);">167</div>
<div class="t" style="left:574.90px;top:717.30px;font-size:13px;line-height:13px;color:#000;transform:scaleX(0.9592);">432</div>
<div class="t" style="left:641.90px;top:717.30px;font-size:13px;line-height:13px;color:#000;transform:scaleX(0.9592);">103</div>
<div class="t" style="left:668.60px;top:716.79px;font-size:13.6px;line-height:13.6px;color:#000;">Disruption,LAFHA,Meal Allowance</div>
<div class="t" style="left:1190.50px;top:717.30px;font-size:13px;line-height:13px;color:#000;transform:scaleX(0.9515);">12355</div>
<div class="t" style="left:22.60px;top:736.79px;font-size:13.6px;line-height:13.6px;color:#000;">demo</div>
<div class="t" style="left:170.50px;top:737.30px;font-size:13px;line-height:13px;color:#000;transform:scaleX(0.9736);">14453</div>
<div class="t" style="left:345.10px;top:737.30px;font-size:13px;line-height:13px;color:#000;transform:scaleX(0.9408);">82</div>
<div class="t" style="left:423.90px;top:737.30px;font-size:13px;line-height:13px;color:#000;transform:scaleX(0.9592);">167</div>
<div class="t" style="left:574.90px;top:737.30px;font-size:13px;line-height:13px;color:#000;transform:scaleX(0.9592);">432</div>
<div class="t" style="left:641.90px;top:737.30px;font-size:13px;line-height:13px;color:#000;transform:scaleX(0.9592);">103</div>
<div class="t" style="left:668.60px;top:736.79px;font-size:13.6px;line-height:13.6px;color:#000;">Disruption,LAFHA,Meal Allowance</div>
<div class="t" style="left:1190.50px;top:737.30px;font-size:13px;line-height:13px;color:#000;transform:scaleX(0.9515);">12355</div>
<div class="t" style="left:22.60px;top:756.79px;font-size:13.6px;line-height:13.6px;color:#000;">demo</div>
<div class="t" style="left:170.50px;top:757.30px;font-size:13px;line-height:13px;color:#000;transform:scaleX(0.9736);">14457</div>
<div class="t" style="left:268.10px;top:757.30px;font-size:13px;line-height:13px;color:#000;transform:scaleX(0.9408);">61</div>
<div class="t" style="left:345.10px;top:757.30px;font-size:13px;line-height:13px;color:#000;transform:scaleX(0.9408);">91</div>
<div class="t" style="left:423.90px;top:757.30px;font-size:13px;line-height:13px;color:#000;transform:scaleX(0.9592);">170</div>
<div class="t" style="left:582.10px;top:757.30px;font-size:13px;line-height:13px;color:#000;transform:scaleX(0.9408);">93</div>
<div class="t" style="left:649.10px;top:757.30px;font-size:13px;line-height:13px;color:#000;transform:scaleX(0.9408);">97</div>
<div class="t" style="left:668.60px;top:756.79px;font-size:13.6px;line-height:13.6px;color:#000;">LAFHA,Meal Allowance</div>
<div class="t" style="left:1190.50px;top:757.30px;font-size:13px;line-height:13px;color:#000;transform:scaleX(0.9473);">1234</div>
<div class="t" style="left:22.60px;top:776.79px;font-size:13.6px;line-height:13.6px;color:#000;">demo</div>
<div class="t" style="left:170.50px;top:777.30px;font-size:13px;line-height:13px;color:#000;transform:scaleX(0.9736);">14457</div>
<div class="t" style="left:268.10px;top:777.30px;font-size:13px;line-height:13px;color:#000;transform:scaleX(0.9408);">61</div>
<div class="t" style="left:345.10px;top:777.30px;font-size:13px;line-height:13px;color:#000;transform:scaleX(0.9408);">91</div>
<div class="t" style="left:423.90px;top:777.30px;font-size:13px;line-height:13px;color:#000;transform:scaleX(0.9592);">170</div>
<div class="t" style="left:582.10px;top:777.30px;font-size:13px;line-height:13px;color:#000;transform:scaleX(0.9408);">93</div>
<div class="t" style="left:649.10px;top:777.30px;font-size:13px;line-height:13px;color:#000;transform:scaleX(0.9408);">97</div>
<div class="t" style="left:668.60px;top:776.79px;font-size:13.6px;line-height:13.6px;color:#000;">LAFHA,Meal Allowance</div>
<div class="t" style="left:1190.50px;top:777.30px;font-size:13px;line-height:13px;color:#000;transform:scaleX(0.9473);">1234</div>
<div class="t" style="left:22.60px;top:796.79px;font-size:13.6px;line-height:13.6px;color:#000;">demo</div>
<div class="t" style="left:170.50px;top:797.30px;font-size:13px;line-height:13px;color:#000;transform:scaleX(0.9736);">14457</div>
<div class="t" style="left:268.10px;top:797.30px;font-size:13px;line-height:13px;color:#000;transform:scaleX(0.9408);">61</div>
<div class="t" style="left:345.10px;top:797.30px;font-size:13px;line-height:13px;color:#000;transform:scaleX(0.9408);">91</div>
<div class="t" style="left:423.90px;top:797.30px;font-size:13px;line-height:13px;color:#000;transform:scaleX(0.9592);">170</div>
<div class="t" style="left:582.10px;top:797.30px;font-size:13px;line-height:13px;color:#000;transform:scaleX(0.9408);">93</div>
<div class="t" style="left:649.10px;top:797.30px;font-size:13px;line-height:13px;color:#000;transform:scaleX(0.9408);">97</div>
<div class="t" style="left:668.60px;top:796.79px;font-size:13.6px;line-height:13.6px;color:#000;">LAFHA,Meal Allowance</div>
<div class="t" style="left:1190.50px;top:797.30px;font-size:13px;line-height:13px;color:#000;transform:scaleX(0.9473);">1234</div>
<div class="t" style="left:22.60px;top:816.79px;font-size:13.6px;line-height:13.6px;color:#000;">demo</div>
<div class="t" style="left:170.50px;top:817.30px;font-size:13px;line-height:13px;color:#000;transform:scaleX(0.9736);">14457</div>
<div class="t" style="left:268.10px;top:817.30px;font-size:13px;line-height:13px;color:#000;transform:scaleX(0.9408);">61</div>
<div class="t" style="left:345.10px;top:817.30px;font-size:13px;line-height:13px;color:#000;transform:scaleX(0.9408);">91</div>
<div class="t" style="left:423.90px;top:817.30px;font-size:13px;line-height:13px;color:#000;transform:scaleX(0.9592);">170</div>
<div class="t" style="left:582.10px;top:817.30px;font-size:13px;line-height:13px;color:#000;transform:scaleX(0.9408);">93</div>
<div class="t" style="left:649.10px;top:817.30px;font-size:13px;line-height:13px;color:#000;transform:scaleX(0.9408);">97</div>
<div class="t" style="left:668.60px;top:816.79px;font-size:13.6px;line-height:13.6px;color:#000;">LAFHA,Meal Allowance</div>
<div class="t" style="left:1190.50px;top:817.30px;font-size:13px;line-height:13px;color:#000;transform:scaleX(0.9473);">1234</div>
<div class="t" style="left:22.60px;top:836.79px;font-size:13.6px;line-height:13.6px;color:#000;">demo</div>
<div class="t" style="left:170.50px;top:837.30px;font-size:13px;line-height:13px;color:#000;transform:scaleX(0.9736);">14457</div>
<div class="t" style="left:268.10px;top:837.30px;font-size:13px;line-height:13px;color:#000;transform:scaleX(0.9408);">61</div>
<div class="t" style="left:345.10px;top:837.30px;font-size:13px;line-height:13px;color:#000;transform:scaleX(0.9408);">91</div>
<div class="t" style="left:423.90px;top:837.30px;font-size:13px;line-height:13px;color:#000;transform:scaleX(0.9592);">170</div>
<div class="t" style="left:582.10px;top:837.30px;font-size:13px;line-height:13px;color:#000;transform:scaleX(0.9408);">93</div>
<div class="t" style="left:649.10px;top:837.30px;font-size:13px;line-height:13px;color:#000;transform:scaleX(0.9408);">97</div>
<div class="t" style="left:668.60px;top:836.79px;font-size:13.6px;line-height:13.6px;color:#000;">LAFHA,Meal Allowance</div>
<div class="t" style="left:1190.50px;top:837.30px;font-size:13px;line-height:13px;color:#000;transform:scaleX(0.9473);">1234</div>
<div class="t" style="left:22.60px;top:856.79px;font-size:13.6px;line-height:13.6px;color:#000;">demo</div>
<div class="t" style="left:170.50px;top:857.30px;font-size:13px;line-height:13px;color:#000;transform:scaleX(0.9736);">14457</div>
<div class="t" style="left:268.10px;top:857.30px;font-size:13px;line-height:13px;color:#000;transform:scaleX(0.9408);">61</div>
<div class="t" style="left:345.10px;top:857.30px;font-size:13px;line-height:13px;color:#000;transform:scaleX(0.9408);">91</div>
<div class="t" style="left:423.90px;top:857.30px;font-size:13px;line-height:13px;color:#000;transform:scaleX(0.9592);">170</div>
<div class="t" style="left:582.10px;top:857.30px;font-size:13px;line-height:13px;color:#000;transform:scaleX(0.9408);">93</div>
<div class="t" style="left:649.10px;top:857.30px;font-size:13px;line-height:13px;color:#000;transform:scaleX(0.9408);">97</div>
<div class="t" style="left:668.60px;top:856.79px;font-size:13.6px;line-height:13.6px;color:#000;">LAFHA,Meal Allowance</div>
<div class="t" style="left:1190.50px;top:857.30px;font-size:13px;line-height:13px;color:#000;transform:scaleX(0.9473);">1234</div>
<div class="t" style="left:22.60px;top:876.79px;font-size:13.6px;line-height:13.6px;color:#000;">demo</div>
<div class="t" style="left:170.50px;top:877.30px;font-size:13px;line-height:13px;color:#000;transform:scaleX(0.9736);">14457</div>
<div class="t" style="left:268.10px;top:877.30px;font-size:13px;line-height:13px;color:#000;transform:scaleX(0.9408);">61</div>
<div class="t" style="left:345.10px;top:877.30px;font-size:13px;line-height:13px;color:#000;transform:scaleX(0.9408);">91</div>
<div class="t" style="left:423.90px;top:877.30px;font-size:13px;line-height:13px;color:#000;transform:scaleX(0.9592);">170</div>
<div class="t" style="left:582.10px;top:877.30px;font-size:13px;line-height:13px;color:#000;transform:scaleX(0.9408);">93</div>
<div class="t" style="left:649.10px;top:877.30px;font-size:13px;line-height:13px;color:#000;transform:scaleX(0.9408);">97</div>
<div class="t" style="left:668.60px;top:876.79px;font-size:13.6px;line-height:13.6px;color:#000;">LAFHA,Meal Allowance</div>
<div class="t" style="left:1190.50px;top:877.30px;font-size:13px;line-height:13px;color:#000;transform:scaleX(0.9473);">1234</div>
<div class="t" style="left:22.60px;top:896.79px;font-size:13.6px;line-height:13.6px;color:#000;">demo</div>
<div class="t" style="left:170.50px;top:897.30px;font-size:13px;line-height:13px;color:#000;transform:scaleX(0.9736);">14457</div>
<div class="t" style="left:268.10px;top:897.30px;font-size:13px;line-height:13px;color:#000;transform:scaleX(0.9408);">61</div>
<div class="t" style="left:345.10px;top:897.30px;font-size:13px;line-height:13px;color:#000;transform:scaleX(0.9408);">91</div>
<div class="t" style="left:423.90px;top:897.30px;font-size:13px;line-height:13px;color:#000;transform:scaleX(0.9592);">170</div>
<div class="t" style="left:582.10px;top:897.30px;font-size:13px;line-height:13px;color:#000;transform:scaleX(0.9408);">93</div>
<div class="t" style="left:649.10px;top:897.30px;font-size:13px;line-height:13px;color:#000;transform:scaleX(0.9408);">97</div>
<div class="t" style="left:668.60px;top:896.79px;font-size:13.6px;line-height:13.6px;color:#000;">LAFHA,Meal Allowance</div>
<div class="t" style="left:1190.50px;top:897.30px;font-size:13px;line-height:13px;color:#000;transform:scaleX(0.9473);">1234</div>
<div class="t" style="left:22.60px;top:916.79px;font-size:13.6px;line-height:13.6px;color:#000;">demo</div>
<div class="t" style="left:170.50px;top:917.30px;font-size:13px;line-height:13px;color:#000;transform:scaleX(0.9736);">14458</div>
<div class="t" style="left:345.10px;top:917.30px;font-size:13px;line-height:13px;color:#000;transform:scaleX(0.9408);">83</div>
<div class="t" style="left:574.90px;top:917.30px;font-size:13px;line-height:13px;color:#000;transform:scaleX(0.9592);">432</div>
<div class="t" style="left:641.90px;top:917.30px;font-size:13px;line-height:13px;color:#000;transform:scaleX(0.9592);">103</div>
<div class="t" style="left:1190.50px;top:917.30px;font-size:13px;line-height:13px;color:#000;transform:scaleX(0.9515);">12355</div>
<div class="t" style="left:22.60px;top:936.79px;font-size:13.6px;line-height:13.6px;color:#000;">demo</div>
<div class="t" style="left:170.50px;top:937.30px;font-size:13px;line-height:13px;color:#000;transform:scaleX(0.9736);">14458</div>
<div class="t" style="left:345.10px;top:937.30px;font-size:13px;line-height:13px;color:#000;transform:scaleX(0.9408);">83</div>
<div class="t" style="left:574.90px;top:937.30px;font-size:13px;line-height:13px;color:#000;transform:scaleX(0.9592);">432</div>
<div class="t" style="left:641.90px;top:937.30px;font-size:13px;line-height:13px;color:#000;transform:scaleX(0.9592);">103</div>
<div class="t" style="left:1190.50px;top:937.30px;font-size:13px;line-height:13px;color:#000;transform:scaleX(0.9515);">12355</div>
<div class="r" style="left:18px;top:191px;width:86px;height:23px;box-sizing:border-box;border:2px solid #146c3c"></div>
<div class="r" style="left:20px;top:193px;width:82px;height:19px;box-sizing:border-box;border:1px solid #fff"></div>
<div class="r" style="left:99px;top:209px;width:7px;height:7px;background:#fff"></div>
<div class="r" style="left:100px;top:210px;width:5px;height:5px;background:#146c3c"></div>
<div class="r" style="left:0px;top:137px;width:101px;height:26px;box-sizing:border-box;border:1px solid #c4c4c4;border-left:none;background:#fff"></div>
<div class="t" style="left:6.00px;top:145.02px;font-size:12.5px;line-height:12.5px;color:#262626;transform:scaleX(1.0335);">A1</div>
<svg class="r" style="left:86px;top:146px" width="10" height="7"><path d="M1 1 L9 1 L5 5.5 Z" fill="#5f5f5f"/></svg>
<div class="r" style="left:115px;top:145px;width:1.6px;height:1.6px;background:#7a7a7a"></div>
<div class="r" style="left:115px;top:149.5px;width:1.6px;height:1.6px;background:#7a7a7a"></div>
<div class="r" style="left:115px;top:154px;width:1.6px;height:1.6px;background:#7a7a7a"></div>
<div class="r" style="left:131px;top:137px;width:110px;height:26px;box-sizing:border-box;border:1px solid #c4c4c4;background:#fff"></div>
<svg class="r" style="left:144px;top:144px" width="13" height="13"><path d="M1.5 1.5 L11.5 11.5 M11.5 1.5 L1.5 11.5" stroke="#a6a6a6" stroke-width="1.3" fill="none"/></svg>
<svg class="r" style="left:179px;top:144px" width="14" height="13"><path d="M1.5 7 L5 10.5 L12.5 2" stroke="#b8b8b8" stroke-width="1.8" fill="none"/></svg>
<div class="t" style="left:216px;top:140px;font-family:'Liberation Serif',serif;font-style:italic;font-weight:bold;font-size:14px;line-height:20px;color:#4a4a4a;-webkit-text-stroke:0">f<span style="font-size:10.5px;font-weight:normal">x</span></div>
<div class="r" style="left:244px;top:137px;width:1021px;height:26px;box-sizing:border-box;border:1px solid #c4c4c4;border-right:none;background:#fff"></div>
<div class="r" style="left:0px;top:956px;width:1265px;height:21px;background:#e6e6e6"></div>
<div class="r" style="left:0px;top:956px;width:1265px;height:1px;background:#939393"></div>
<div class="r" style="left:94px;top:956px;width:1px;height:21px;background:#9c9c9c"></div>
<svg class="r" style="left:18px;top:963px" width="40" height="12"><path d="M9 2 L5 6 L9 10 Z M48 0" fill="#b9b9b9"/><path d="M32 2 L36 6 L32 10 Z" fill="#b9b9b9"/></svg>
<div class="r" style="left:95px;top:953px;width:91px;height:24px;background:#fff"></div>
<div class="r" style="left:185px;top:956px;width:1px;height:21px;background:#9c9c9c"></div>
<div class="t" style="left:106.60px;top:963.22px;font-size:12.5px;line-height:12.5px;color:#17643a;font-weight:bold;-webkit-text-stroke:0;transform:scaleX(1.0167);">timesheets</div>
<div class="t" style="left:198.60px;top:963.22px;font-size:12.5px;line-height:12.5px;color:#3a3a3a;transform:scaleX(0.9441);">Sheet1</div>
<div class="r" style="left:249px;top:960px;width:1px;height:17px;background:#9a9a9a"></div>
<svg class="r" style="left:282px;top:960px" width="18" height="18"><circle cx="9" cy="9" r="7.5" fill="none" stroke="#6a6a6a" stroke-width="1.1"/><path d="M9 5 V13 M5 9 H13" stroke="#555" stroke-width="1.3"/></svg>
<div class="r" style="left:936px;top:965px;width:2px;height:2px;background:#9c9c9c"></div>
<div class="r" style="left:936px;top:969.5px;width:2px;height:2px;background:#9c9c9c"></div>
<div class="r" style="left:936px;top:974px;width:2px;height:2px;background:#9c9c9c"></div>
<div class="r" style="left:1067px;top:963px;width:198px;height:14px;background:#ececec"></div>
<div class="r" style="left:953px;top:963px;width:114px;height:15px;box-sizing:border-box;border:1px solid #8e8e8e;background:#fff"></div>
<div class="r" style="left:968px;top:963px;width:1px;height:15px;background:#8e8e8e"></div>
<svg class="r" style="left:954px;top:964px" width="14" height="13"><path d="M9 3 L5 6.5 L9 10 Z" fill="#222"/></svg>
<svg class="r" style="left:4px;top:84px" width="18" height="18" viewBox="4 84 18 18"><rect x="8.5" y="88.5" width="8" height="9" fill="#fff" stroke="#444" stroke-width="1.1"/><path d="M8.5 91.5 H16.5 M8.5 94.5 H16.5 M12.5 91.5 V97.5" stroke="#444" stroke-width="1"/><path d="M12.5 84.6 L10.8 86.6 H14.2 Z M12.5 100.4 L10.8 98.4 H14.2 Z M5 93 L7 91.3 V94.7 Z M20 93 L18 91.3 V94.7 Z" fill="#2a8ad4"/></svg>
<svg class="r" style="left:112px;top:36px" width="19" height="19" viewBox="112 36 19 19"><rect x="113.6" y="37.6" width="15" height="15" fill="#fff" stroke="#444" stroke-width="1.2"/><rect x="115.4" y="39.4" width="2.2" height="2.2" fill="#c8c6c4" stroke="#666" stroke-width="0.8"/><rect x="119.2" y="39.4" width="7.8" height="2.2" fill="#c8c6c4" stroke="#666" stroke-width="0.8"/><rect x="115.4" y="43.6" width="2.2" height="7" fill="#c8c6c4" stroke="#666" stroke-width="0.8"/><path d="M125.6 44.5 V49.5 H121" fill="none" stroke="#2a8ad4" stroke-width="1.2"/><circle cx="125.6" cy="44.3" r="1.2" fill="#2a8ad4"/><circle cx="121.3" cy="49.5" r="1.2" fill="#2a8ad4"/></svg>
<svg class="r" style="left:113px;top:60px" width="18" height="19" viewBox="113 60 18 19"><rect x="115.6" y="61.6" width="11" height="4.6" fill="#72b5e8" stroke="#1a6fbf" stroke-width="1.2"/><path d="M115.6 66.2 V72 M126.6 66.2 V69.5" stroke="#444" stroke-width="1.2"/><path d="M115.6 71.8 H122 L123 74 L122 76.5 H115.6 Z" fill="#72b5e8" stroke="#1a6fbf" stroke-width="1.2"/><path d="M122.5 70.5 L128.8 76.8 M128.8 70.5 L122.5 76.8" stroke="#f0474c" stroke-width="1.3"/></svg>
<svg class="r" style="left:112px;top:84px" width="19" height="19" viewBox="112 84 19 19"><rect x="115.8" y="85.6" width="10" height="4.4" fill="#fff" stroke="#444" stroke-width="1.1"/><rect x="116.4" y="86.2" width="3.6" height="3.2" fill="#72b5e8"/><path d="M120.8 85.6 V90" stroke="#444" stroke-width="1"/><rect x="120.5" y="93.6" width="8.3" height="6.4" fill="#72b5e8" stroke="#444" stroke-width="1.1"/><path d="M116 90.2 C112.8 92.5 113.5 97.2 119.5 97.3" fill="none" stroke="#2a8ad4" stroke-width="1.2"/><path d="M117.8 95 L120.3 97.3 L117.8 99.7" fill="none" stroke="#2a8ad4" stroke-width="1.2"/></svg>
<svg class="r" style="left:287px;top:36px" width="34" height="34" viewBox="287 36 34 34"><path d="M305.5 65.8 H289.6 V38.6 H316.6 V54" fill="#fff" stroke="#444" stroke-width="1.1"/><rect x="290.1" y="39.1" width="26" height="3.6" fill="#c9c7c5"/><path d="M289.6 42.8 H316.6" stroke="#444" stroke-width="1"/><rect x="293.5" y="46.6" width="19.4" height="4.8" rx="0.6" fill="#72b5e8" stroke="#1a6fbf" stroke-width="1"/><rect x="293.6" y="55.6" width="12" height="5" fill="#c9c7c5" stroke="#8a8886" stroke-width="0.9"/><path d="M304.8 53.6 H319 V55.8 L313.7 61 V67.6 H309.8 V61 L304.8 55.8 Z" fill="#fafafa" stroke="#444" stroke-width="1.1" stroke-linejoin="round"/></svg>
<svg class="r" style="left:345px;top:36px" width="34" height="34" viewBox="345 36 34 34"><rect x="347.6" y="38.6" width="26.8" height="26.8" fill="#fafafa"/><rect x="348" y="39" width="26" height="3.4" fill="#c9c7c5"/><path d="M369 65.4 H347.6 V38.6 H374.4 V56.5 M347.6 42.6 H374.4 M347.6 50.4 H374.4 M347.6 57.4 H365 M356.3 42.6 V65.4 M365.3 42.6 V65.4" fill="none" stroke="#444" stroke-width="1.1"/><path d="M361 61.6 H376.3 M370.8 55.8 L376.6 61.6 L370.8 67.4" fill="none" stroke="#1b8ad3" stroke-width="1.3"/></svg>
<svg class="r" style="left:357px;top:92px" width="8" height="5"><path d="M1 1 L4 4 L7 1" fill="none" stroke="#444" stroke-width="1.2"/></svg>
<svg class="r" style="left:391px;top:36px" width="34" height="34" viewBox="391 36 34 34"><path d="M403.6 65.4 H393.6 V38.6 H405.4 L413.6 46.4 V51" fill="#fafafa" stroke="#444" stroke-width="1.1"/><path d="M405.4 38.6 V46.4 H413.6" fill="none" stroke="#444" stroke-width="1.1"/><path d="M405.8 59.8 A6.8 6.8 0 0 1 418.9 58.5 M419.3 61.2 A6.8 6.8 0 0 1 406.1 63.1" fill="none" stroke="#21a053" stroke-width="1.4"/><path d="M419.3 54.2 V58.7 H415 M405.7 67.6 V63 H410" fill="none" stroke="#21a053" stroke-width="1.4"/></svg>
<svg class="r" style="left:400px;top:92px" width="8" height="5"><path d="M1 1 L4 4 L7 1" fill="none" stroke="#444" stroke-width="1.2"/></svg>
<svg class="r" style="left:430px;top:36px" width="15" height="19" viewBox="430 36 15 19"><rect x="431.8" y="37.9" width="10.6" height="14.6" fill="#fff" stroke="#444" stroke-width="1.1"/><rect x="434.6" y="41.2" width="2.2" height="2.2" fill="#fff" stroke="#555" stroke-width="0.8"/><rect x="434.6" y="46.2" width="2.2" height="2.2" fill="#fff" stroke="#555" stroke-width="0.8"/><path d="M438.2 42.3 H440.6 M438.2 47.3 H440.6" stroke="#555" stroke-width="0.9"/></svg>
<svg class="r" style="left:428px;top:60px" width="18" height="18" viewBox="428 60 18 18"><path d="M434.5 76.6 H429.6 V61.6 H444.4 V68" fill="#f3f3f3" stroke="#a3a3a3" stroke-width="1.1"/><rect x="430" y="62" width="14" height="2.4" fill="#c8c8c8"/><path d="M429.6 64.6 H444.4 M429.6 68.6 H438 M429.6 72.6 H436 M434.6 64.6 V76.6 M439.6 64.6 V68.4" stroke="#a3a3a3" stroke-width="0.9"/><circle cx="440.4" cy="72.4" r="4.4" fill="#f0f0f0" stroke="#a3a3a3" stroke-width="1.1"/><path d="M436 72.4 H444.8 M440.4 68 V76.8" stroke="#a3a3a3" stroke-width="0.8"/><ellipse cx="440.4" cy="72.4" rx="1.8" ry="4.4" fill="none" stroke="#a3a3a3" stroke-width="0.8"/></svg>
<svg class="r" style="left:428px;top:84px" width="18" height="18" viewBox="428 84 18 18"><path d="M438.4 91 C438.4 89.6 437.5 88.7 436 88.7 H432.3 A3.05 3.05 0 0 0 432.3 94.8 H434.6" fill="none" stroke="#444" stroke-width="1.2"/><path d="M435.3 94.6 C435.3 92.6 436.3 91.7 438 91.7 H441.5 A3.05 3.05 0 0 1 441.5 97.8 H437.6 C436.3 97.8 435.6 97.2 435.4 96.4" fill="none" stroke="#444" stroke-width="1.2"/><path d="M440.3 84.8 L440.9 88.8 M444.8 85.8 L442.4 89.4 M432.2 96.4 L430.6 99.8 M433.9 97.2 L434 101" stroke="#f0474c" stroke-width="1.1"/></svg>
<div class="r" style="left:886px;top:36px;width:400px;height:60px;box-sizing:border-box;border:1px solid #d2d0ce;background:#fff"></div>
<div class="r" style="left:888px;top:39px;width:69px;height:54px;box-sizing:border-box;border:1px solid #8c8c8c;background:#c6c6c6"></div>
<svg class="r" style="left:0;top:0" width="1265" height="100"><rect x="892" y="43.00" width="61" height="9.20" fill="#5da447"/><rect x="892" y="52.20" width="61" height="9.20" fill="#ddebd5"/><rect x="892" y="61.40" width="61" height="9.20" fill="#ffffff"/><rect x="892" y="70.60" width="61" height="9.20" fill="#ddebd5"/><rect x="892" y="79.80" width="61" height="9.20" fill="#ffffff"/><rect x="892.5" y="43.5" width="60" height="45" fill="none" stroke="#a8d08d" stroke-width="1"/><path d="M892 52.20 H953" stroke="#a8d08d" stroke-width="1"/><path d="M892 61.40 H953" stroke="#a8d08d" stroke-width="1"/><path d="M892 70.60 H953" stroke="#a8d08d" stroke-width="1"/><path d="M892 79.80 H953" stroke="#a8d08d" stroke-width="1"/><rect x="894.50" y="46.80" width="7" height="1.6" fill="#ffffff"/><rect x="906.60" y="46.80" width="7" height="1.6" fill="#ffffff"/><rect x="918.70" y="46.80" width="7" height="1.6" fill="#ffffff"/><rect x="930.80" y="46.80" width="7" height="1.6" fill="#ffffff"/><rect x="942.90" y="46.80" width="7" height="1.6" fill="#ffffff"/><rect x="894.50" y="56.00" width="7" height="1.6" fill="#262626"/><rect x="906.60" y="56.00" width="7" height="1.6" fill="#262626"/><rect x="918.70" y="56.00" width="7" height="1.6" fill="#262626"/><rect x="930.80" y="56.00" width="7" height="1.6" fill="#262626"/><rect x="942.90" y="56.00" width="7" height="1.6" fill="#262626"/><rect x="894.50" y="65.20" width="7" height="1.6" fill="#262626"/><rect x="906.60" y="65.20" width="7" height="1.6" fill="#262626"/><rect x="918.70" y="65.20" width="7" height="1.6" fill="#262626"/><rect x="930.80" y="65.20" width="7" height="1.6" fill="#262626"/><rect x="942.90" y="65.20" width="7" height="1.6" fill="#262626"/><rect x="894.50" y="74.40" width="7" height="1.6" fill="#262626"/><rect x="906.60" y="74.40" width="7" height="1.6" fill="#262626"/><rect x="918.70" y="74.40" width="7" height="1.6" fill="#262626"/><rect x="930.80" y="74.40" width="7" height="1.6" fill="#262626"/><rect x="942.90" y="74.40" width="7" height="1.6" fill="#262626"/><rect x="894.50" y="83.60" width="7" height="1.6" fill="#262626"/><rect x="906.60" y="83.60" width="7" height="1.6" fill="#262626"/><rect x="918.70" y="83.60" width="7" height="1.6" fill="#262626"/><rect x="930.80" y="83.60" width="7" height="1.6" fill="#262626"/><rect x="942.90" y="83.60" width="7" height="1.6" fill="#262626"/></svg>
<svg class="r" style="left:0;top:0" width="1265" height="100"><rect x="961.00" y="43.00" width="11.4" height="8.6" fill="#000000"/><rect x="964.00" y="46.70" width="7" height="1.5" fill="#ffffff"/><rect x="973.30" y="43.00" width="11.4" height="8.6" fill="#000000"/><rect x="976.30" y="46.70" width="7" height="1.5" fill="#ffffff"/><rect x="985.60" y="43.00" width="11.4" height="8.6" fill="#000000"/><rect x="988.60" y="46.70" width="7" height="1.5" fill="#ffffff"/><rect x="997.90" y="43.00" width="11.4" height="8.6" fill="#000000"/><rect x="1000.90" y="46.70" width="7" height="1.5" fill="#ffffff"/><rect x="1010.20" y="43.00" width="11.4" height="8.6" fill="#000000"/><rect x="1013.20" y="46.70" width="7" height="1.5" fill="#ffffff"/><rect x="961.00" y="52.30" width="11.4" height="8.6" fill="#a5a5a5"/><rect x="964.00" y="56.00" width="7" height="1.5" fill="#262626"/><rect x="973.30" y="52.30" width="11.4" height="8.6" fill="#a5a5a5"/><rect x="976.30" y="56.00" width="7" height="1.5" fill="#262626"/><rect x="985.60" y="52.30" width="11.4" height="8.6" fill="#a5a5a5"/><rect x="988.60" y="56.00" width="7" height="1.5" fill="#262626"/><rect x="997.90" y="52.30" width="11.4" height="8.6" fill="#a5a5a5"/><rect x="1000.90" y="56.00" width="7" height="1.5" fill="#262626"/><rect x="1010.20" y="52.30" width="11.4" height="8.6" fill="#a5a5a5"/><rect x="1013.20" y="56.00" width="7" height="1.5" fill="#262626"/><rect x="961.00" y="61.60" width="11.4" height="8.6" fill="#d9d9d9"/><rect x="964.00" y="65.30" width="7" height="1.5" fill="#262626"/><rect x="973.30" y="61.60" width="11.4" height="8.6" fill="#d9d9d9"/><rect x="976.30" y="65.30" width="7" height="1.5" fill="#262626"/><rect x="985.60" y="61.60" width="11.4" height="8.6" fill="#d9d9d9"/><rect x="988.60" y="65.30" width="7" height="1.5" fill="#262626"/><rect x="997.90" y="61.60" width="11.4" height="8.6" fill="#d9d9d9"/><rect x="1000.90" y="65.30" width="7" height="1.5" fill="#262626"/><rect x="1010.20" y="61.60" width="11.4" height="8.6" fill="#d9d9d9"/><rect x="1013.20" y="65.30" width="7" height="1.5" fill="#262626"/><rect x="961.00" y="70.90" width="11.4" height="8.6" fill="#a5a5a5"/><rect x="964.00" y="74.60" width="7" height="1.5" fill="#262626"/><rect x="973.30" y="70.90" width="11.4" height="8.6" fill="#a5a5a5"/><rect x="976.30" y="74.60" width="7" height="1.5" fill="#262626"/><rect x="985.60" y="70.90" width="11.4" height="8.6" fill="#a5a5a5"/><rect x="988.60" y="74.60" width="7" height="1.5" fill="#262626"/><rect x="997.90" y="70.90" width="11.4" height="8.6" fill="#a5a5a5"/><rect x="1000.90" y="74.60" width="7" height="1.5" fill="#262626"/><rect x="1010.20" y="70.90" width="11.4" height="8.6" fill="#a5a5a5"/><rect x="1013.20" y="74.60" width="7" height="1.5" fill="#262626"/><rect x="961.00" y="80.20" width="11.4" height="8.6" fill="#d9d9d9"/><rect x="964.00" y="83.90" width="7" height="1.5" fill="#262626"/><rect x="973.30" y="80.20" width="11.4" height="8.6" fill="#d9d9d9"/><rect x="976.30" y="83.90" width="7" height="1.5" fill="#262626"/><rect x="985.60" y="80.20" width="11.4" height="8.6" fill="#d9d9d9"/><rect x="988.60" y="83.90" width="7" height="1.5" fill="#262626"/><rect x="997.90" y="80.20" width="11.4" height="8.6" fill="#d9d9d9"/><rect x="1000.90" y="83.90" width="7" height="1.5" fill="#262626"/><rect x="1010.20" y="80.20" width="11.4" height="8.6" fill="#d9d9d9"/><rect x="1013.20" y="83.90" width="7" height="1.5" fill="#262626"/><rect x="1030.20" y="43.00" width="11.4" height="8.6" fill="#3f6dc2"/><rect x="1033.20" y="46.70" width="7" height="1.5" fill="#ffffff"/><rect x="1042.50" y="43.00" width="11.4" height="8.6" fill="#3f6dc2"/><rect x="1045.50" y="46.70" width="7" height="1.5" fill="#ffffff"/><rect x="1054.80" y="43.00" width="11.4" height="8.6" fill="#3f6dc2"/><rect x="1057.80" y="46.70" width="7" height="1.5" fill="#ffffff"/><rect x="1067.10" y="43.00" width="11.4" height="8.6" fill="#3f6dc2"/><rect x="1070.10" y="46.70" width="7" height="1.5" fill="#ffffff"/><rect x="1079.40" y="43.00" width="11.4" height="8.6" fill="#3f6dc2"/><rect x="1082.40" y="46.70" width="7" height="1.5" fill="#ffffff"/><rect x="1030.20" y="52.30" width="11.4" height="8.6" fill="#b4c6e7"/><rect x="1033.20" y="56.00" width="7" height="1.5" fill="#262626"/><rect x="1042.50" y="52.30" width="11.4" height="8.6" fill="#b4c6e7"/><rect x="1045.50" y="56.00" width="7" height="1.5" fill="#262626"/><rect x="1054.80" y="52.30" width="11.4" height="8.6" fill="#b4c6e7"/><rect x="1057.80" y="56.00" width="7" height="1.5" fill="#262626"/><rect x="1067.10" y="52.30" width="11.4" height="8.6" fill="#b4c6e7"/><rect x="1070.10" y="56.00" width="7" height="1.5" fill="#262626"/><rect x="1079.40" y="52.30" width="11.4" height="8.6" fill="#b4c6e7"/><rect x="1082.40" y="56.00" width="7" height="1.5" fill="#262626"/><rect x="1030.20" y="61.60" width="11.4" height="8.6" fill="#d9e1f2"/><rect x="1033.20" y="65.30" width="7" height="1.5" fill="#262626"/><rect x="1042.50" y="61.60" width="11.4" height="8.6" fill="#d9e1f2"/><rect x="1045.50" y="65.30" width="7" height="1.5" fill="#262626"/><rect x="1054.80" y="61.60" width="11.4" height="8.6" fill="#d9e1f2"/><rect x="1057.80" y="65.30" width="7" height="1.5" fill="#262626"/><rect x="1067.10" y="61.60" width="11.4" height="8.6" fill="#d9e1f2"/><rect x="1070.10" y="65.30" width="7" height="1.5" fill="#262626"/><rect x="1079.40" y="61.60" width="11.4" height="8.6" fill="#d9e1f2"/><rect x="1082.40" y="65.30" width="7" height="1.5" fill="#262626"/><rect x="1030.20" y="70.90" width="11.4" height="8.6" fill="#b4c6e7"/><rect x="1033.20" y="74.60" width="7" height="1.5" fill="#262626"/><rect x="1042.50" y="70.90" width="11.4" height="8.6" fill="#b4c6e7"/><rect x="1045.50" y="74.60" width="7" height="1.5" fill="#262626"/><rect x="1054.80" y="70.90" width="11.4" height="8.6" fill="#b4c6e7"/><rect x="1057.80" y="74.60" width="7" height="1.5" fill="#262626"/><rect x="1067.10" y="70.90" width="11.4" height="8.6" fill="#b4c6e7"/><rect x="1070.10" y="74.60" width="7" height="1.5" fill="#262626"/><rect x="1079.40" y="70.90" width="11.4" height="8.6" fill="#b4c6e7"/><rect x="1082.40" y="74.60" width="7" height="1.5" fill="#262626"/><rect x="1030.20" y="80.20" width="11.4" height="8.6" fill="#d9e1f2"/><rect x="1033.20" y="83.90" width="7" height="1.5" fill="#262626"/><rect x="1042.50" y="80.20" width="11.4" height="8.6" fill="#d9e1f2"/><rect x="1045.50" y="83.90" width="7" height="1.5" fill="#262626"/><rect x="1054.80" y="80.20" width="11.4" height="8.6" fill="#d9e1f2"/><rect x="1057.80" y="83.90" width="7" height="1.5" fill="#262626"/><rect x="1067.10" y="80.20" width="11.4" height="8.6" fill="#d9e1f2"/><rect x="1070.10" y="83.90" width="7" height="1.5" fill="#262626"/><rect x="1079.40" y="80.20" width="11.4" height="8.6" fill="#d9e1f2"/><rect x="1082.40" y="83.90" width="7" height="1.5" fill="#262626"/><rect x="1099.40" y="43.00" width="11.4" height="8.6" fill="#f0712d"/><rect x="1102.40" y="46.70" width="7" height="1.5" fill="#ffffff"/><rect x="1111.70" y="43.00" width="11.4" height="8.6" fill="#f0712d"/><rect x="1114.70" y="46.70" width="7" height="1.5" fill="#ffffff"/><rect x="1124.00" y="43.00" width="11.4" height="8.6" fill="#f0712d"/><rect x="1127.00" y="46.70" width="7" height="1.5" fill="#ffffff"/><rect x="1136.30" y="43.00" width="11.4" height="8.6" fill="#f0712d"/><rect x="1139.30" y="46.70" width="7" height="1.5" fill="#ffffff"/><rect x="1148.60" y="43.00" width="11.4" height="8.6" fill="#f0712d"/><rect x="1151.60" y="46.70" width="7" height="1.5" fill="#ffffff"/><rect x="1099.40" y="52.30" width="11.4" height="8.6" fill="#f8cbad"/><rect x="1102.40" y="56.00" width="7" height="1.5" fill="#262626"/><rect x="1111.70" y="52.30" width="11.4" height="8.6" fill="#f8cbad"/><rect x="1114.70" y="56.00" width="7" height="1.5" fill="#262626"/><rect x="1124.00" y="52.30" width="11.4" height="8.6" fill="#f8cbad"/><rect x="1127.00" y="56.00" width="7" height="1.5" fill="#262626"/><rect x="1136.30" y="52.30" width="11.4" height="8.6" fill="#f8cbad"/><rect x="1139.30" y="56.00" width="7" height="1.5" fill="#262626"/><rect x="1148.60" y="52.30" width="11.4" height="8.6" fill="#f8cbad"/><rect x="1151.60" y="56.00" width="7" height="1.5" fill="#262626"/><rect x="1099.40" y="61.60" width="11.4" height="8.6" fill="#fce4d6"/><rect x="1102.40" y="65.30" width="7" height="1.5" fill="#262626"/><rect x="1111.70" y="61.60" width="11.4" height="8.6" fill="#fce4d6"/><rect x="1114.70" y="65.30" width="7" height="1.5" fill="#262626"/><rect x="1124.00" y="61.60" width="11.4" height="8.6" fill="#fce4d6"/><rect x="1127.00" y="65.30" width="7" height="1.5" fill="#262626"/><rect x="1136.30" y="61.60" width="11.4" height="8.6" fill="#fce4d6"/><rect x="1139.30" y="65.30" width="7" height="1.5" fill="#262626"/><rect x="1148.60" y="61.60" width="11.4" height="8.6" fill="#fce4d6"/><rect x="1151.60" y="65.30" width="7" height="1.5" fill="#262626"/><rect x="1099.40" y="70.90" width="11.4" height="8.6" fill="#f8cbad"/><rect x="1102.40" y="74.60" width="7" height="1.5" fill="#262626"/><rect x="1111.70" y="70.90" width="11.4" height="8.6" fill="#f8cbad"/><rect x="1114.70" y="74.60" width="7" height="1.5" fill="#262626"/><rect x="1124.00" y="70.90" width="11.4" height="8.6" fill="#f8cbad"/><rect x="1127.00" y="74.60" width="7" height="1.5" fill="#262626"/><rect x="1136.30" y="70.90" width="11.4" height="8.6" fill="#f8cbad"/><rect x="1139.30" y="74.60" width="7" height="1.5" fill="#262626"/><rect x="1148.60" y="70.90" width="11.4" height="8.6" fill="#f8cbad"/><rect x="1151.60" y="74.60" width="7" height="1.5" fill="#262626"/><rect x="1099.40" y="80.20" width="11.4" height="8.6" fill="#fce4d6"/><rect x="1102.40" y="83.90" width="7" height="1.5" fill="#262626"/><rect x="1111.70" y="80.20" width="11.4" height="8.6" fill="#fce4d6"/><rect x="1114.70" y="83.90" width="7" height="1.5" fill="#262626"/><rect x="1124.00" y="80.20" width="11.4" height="8.6" fill="#fce4d6"/><rect x="1127.00" y="83.90" width="7" height="1.5" fill="#262626"/><rect x="1136.30" y="80.20" width="11.4" height="8.6" fill="#fce4d6"/><rect x="1139.30" y="83.90" width="7" height="1.5" fill="#262626"/><rect x="1148.60" y="80.20" width="11.4" height="8.6" fill="#fce4d6"/><rect x="1151.60" y="83.90" width="7" height="1.5" fill="#262626"/><rect x="1168.60" y="43.00" width="11.4" height="8.6" fill="#a5a5a5"/><rect x="1171.60" y="46.70" width="7" height="1.5" fill="#ffffff"/><rect x="1180.90" y="43.00" width="11.4" height="8.6" fill="#a5a5a5"/><rect x="1183.90" y="46.70" width="7" height="1.5" fill="#ffffff"/><rect x="1193.20" y="43.00" width="11.4" height="8.6" fill="#a5a5a5"/><rect x="1196.20" y="46.70" width="7" height="1.5" fill="#ffffff"/><rect x="1205.50" y="43.00" width="11.4" height="8.6" fill="#a5a5a5"/><rect x="1208.50" y="46.70" width="7" height="1.5" fill="#ffffff"/><rect x="1217.80" y="43.00" width="11.4" height="8.6" fill="#a5a5a5"/><rect x="1220.80" y="46.70" width="7" height="1.5" fill="#ffffff"/><rect x="1168.60" y="52.30" width="11.4" height="8.6" fill="#d9d9d9"/><rect x="1171.60" y="56.00" width="7" height="1.5" fill="#262626"/><rect x="1180.90" y="52.30" width="11.4" height="8.6" fill="#d9d9d9"/><rect x="1183.90" y="56.00" width="7" height="1.5" fill="#262626"/><rect x="1193.20" y="52.30" width="11.4" height="8.6" fill="#d9d9d9"/><rect x="1196.20" y="56.00" width="7" height="1.5" fill="#262626"/><rect x="1205.50" y="52.30" width="11.4" height="8.6" fill="#d9d9d9"/><rect x="1208.50" y="56.00" width="7" height="1.5" fill="#262626"/><rect x="1217.80" y="52.30" width="11.4" height="8.6" fill="#d9d9d9"/><rect x="1220.80" y="56.00" width="7" height="1.5" fill="#262626"/><rect x="1168.60" y="61.60" width="11.4" height="8.6" fill="#ededed"/><rect x="1171.60" y="65.30" width="7" height="1.5" fill="#262626"/><rect x="1180.90" y="61.60" width="11.4" height="8.6" fill="#ededed"/><rect x="1183.90" y="65.30" width="7" height="1.5" fill="#262626"/><rect x="1193.20" y="61.60" width="11.4" height="8.6" fill="#ededed"/><rect x="1196.20" y="65.30" width="7" height="1.5" fill="#262626"/><rect x="1205.50" y="61.60" width="11.4" height="8.6" fill="#ededed"/><rect x="1208.50" y="65.30" width="7" height="1.5" fill="#262626"/><rect x="1217.80" y="61.60" width="11.4" height="8.6" fill="#ededed"/><rect x="1220.80" y="65.30" width="7" height="1.5" fill="#262626"/><rect x="1168.60" y="70.90" width="11.4" height="8.6" fill="#d9d9d9"/><rect x="1171.60" y="74.60" width="7" height="1.5" fill="#262626"/><rect x="1180.90" y="70.90" width="11.4" height="8.6" fill="#d9d9d9"/><rect x="1183.90" y="74.60" width="7" height="1.5" fill="#262626"/><rect x="1193.20" y="70.90" width="11.4" height="8.6" fill="#d9d9d9"/><rect x="1196.20" y="74.60" width="7" height="1.5" fill="#262626"/><rect x="1205.50" y="70.90" width="11.4" height="8.6" fill="#d9d9d9"/><rect x="1208.50" y="74.60" width="7" height="1.5" fill="#262626"/><rect x="1217.80" y="70.90" width="11.4" height="8.6" fill="#d9d9d9"/><rect x="1220.80" y="74.60" width="7" height="1.5" fill="#262626"/><rect x="1168.60" y="80.20" width="11.4" height="8.6" fill="#ededed"/><rect x="1171.60" y="83.90" width="7" height="1.5" fill="#262626"/><rect x="1180.90" y="80.20" width="11.4" height="8.6" fill="#ededed"/><rect x="1183.90" y="83.90" width="7" height="1.5" fill="#262626"/><rect x="1193.20" y="80.20" width="11.4" height="8.6" fill="#ededed"/><rect x="1196.20" y="83.90" width="7" height="1.5" fill="#262626"/><rect x="1205.50" y="80.20" width="11.4" height="8.6" fill="#ededed"/><rect x="1208.50" y="83.90" width="7" height="1.5" fill="#262626"/><rect x="1217.80" y="80.20" width="11.4" height="8.6" fill="#ededed"/><rect x="1220.80" y="83.90" width="7" height="1.5" fill="#262626"/><rect x="1237.80" y="43.00" width="11.4" height="8.6" fill="#fbb123"/><rect x="1240.80" y="46.70" width="7" height="1.5" fill="#ffffff"/><rect x="1250.10" y="43.00" width="11.4" height="8.6" fill="#fbb123"/><rect x="1253.10" y="46.70" width="7" height="1.5" fill="#ffffff"/><rect x="1262.40" y="43.00" width="11.4" height="8.6" fill="#fbb123"/><rect x="1265.40" y="46.70" width="7" height="1.5" fill="#ffffff"/><rect x="1274.70" y="43.00" width="11.4" height="8.6" fill="#fbb123"/><rect x="1277.70" y="46.70" width="7" height="1.5" fill="#ffffff"/><rect x="1287.00" y="43.00" width="11.4" height="8.6" fill="#fbb123"/><rect x="1290.00" y="46.70" width="7" height="1.5" fill="#ffffff"/><rect x="1237.80" y="52.30" width="11.4" height="8.6" fill="#ffe699"/><rect x="1240.80" y="56.00" width="7" height="1.5" fill="#262626"/><rect x="1250.10" y="52.30" width="11.4" height="8.6" fill="#ffe699"/><rect x="1253.10" y="56.00" width="7" height="1.5" fill="#262626"/><rect x="1262.40" y="52.30" width="11.4" height="8.6" fill="#ffe699"/><rect x="1265.40" y="56.00" width="7" height="1.5" fill="#262626"/><rect x="1274.70" y="52.30" width="11.4" height="8.6" fill="#ffe699"/><rect x="1277.70" y="56.00" width="7" height="1.5" fill="#262626"/><rect x="1287.00" y="52.30" width="11.4" height="8.6" fill="#ffe699"/><rect x="1290.00" y="56.00" width="7" height="1.5" fill="#262626"/><rect x="1237.80" y="61.60" width="11.4" height="8.6" fill="#fff2cc"/><rect x="1240.80" y="65.30" width="7" height="1.5" fill="#262626"/><rect x="1250.10" y="61.60" width="11.4" height="8.6" fill="#fff2cc"/><rect x="1253.10" y="65.30" width="7" height="1.5" fill="#262626"/><rect x="1262.40" y="61.60" width="11.4" height="8.6" fill="#fff2cc"/><rect x="1265.40" y="65.30" width="7" height="1.5" fill="#262626"/><rect x="1274.70" y="61.60" width="11.4" height="8.6" fill="#fff2cc"/><rect x="1277.70" y="65.30" width="7" height="1.5" fill="#262626"/><rect x="1287.00" y="61.60" width="11.4" height="8.6" fill="#fff2cc"/><rect x="1290.00" y="65.30" width="7" height="1.5" fill="#262626"/><rect x="1237.80" y="70.90" width="11.4" height="8.6" fill="#ffe699"/><rect x="1240.80" y="74.60" width="7" height="1.5" fill="#262626"/><rect x="1250.10" y="70.90" width="11.4" height="8.6" fill="#ffe699"/><rect x="1253.10" y="74.60" width="7" height="1.5" fill="#262626"/><rect x="1262.40" y="70.90" width="11.4" height="8.6" fill="#ffe699"/><rect x="1265.40" y="74.60" width="7" height="1.5" fill="#262626"/><rect x="1274.70" y="70.90" width="11.4" height="8.6" fill="#ffe699"/><rect x="1277.70" y="74.60" width="7" height="1.5" fill="#262626"/><rect x="1287.00" y="70.90" width="11.4" height="8.6" fill="#ffe699"/><rect x="1290.00" y="74.60" width="7" height="1.5" fill="#262626"/><rect x="1237.80" y="80.20" width="11.4" height="8.6" fill="#fff2cc"/><rect x="1240.80" y="83.90" width="7" height="1.5" fill="#262626"/><rect x="1250.10" y="80.20" width="11.4" height="8.6" fill="#fff2cc"/><rect x="1253.10" y="83.90" width="7" height="1.5" fill="#262626"/><rect x="1262.40" y="80.20" width="11.4" height="8.6" fill="#fff2cc"/><rect x="1265.40" y="83.90" width="7" height="1.5" fill="#262626"/><rect x="1274.70" y="80.20" width="11.4" height="8.6" fill="#fff2cc"/><rect x="1277.70" y="83.90" width="7" height="1.5" fill="#262626"/><rect x="1287.00" y="80.20" width="11.4" height="8.6" fill="#fff2cc"/><rect x="1290.00" y="83.90" width="7" height="1.5" fill="#262626"/></svg>
</body></html>
